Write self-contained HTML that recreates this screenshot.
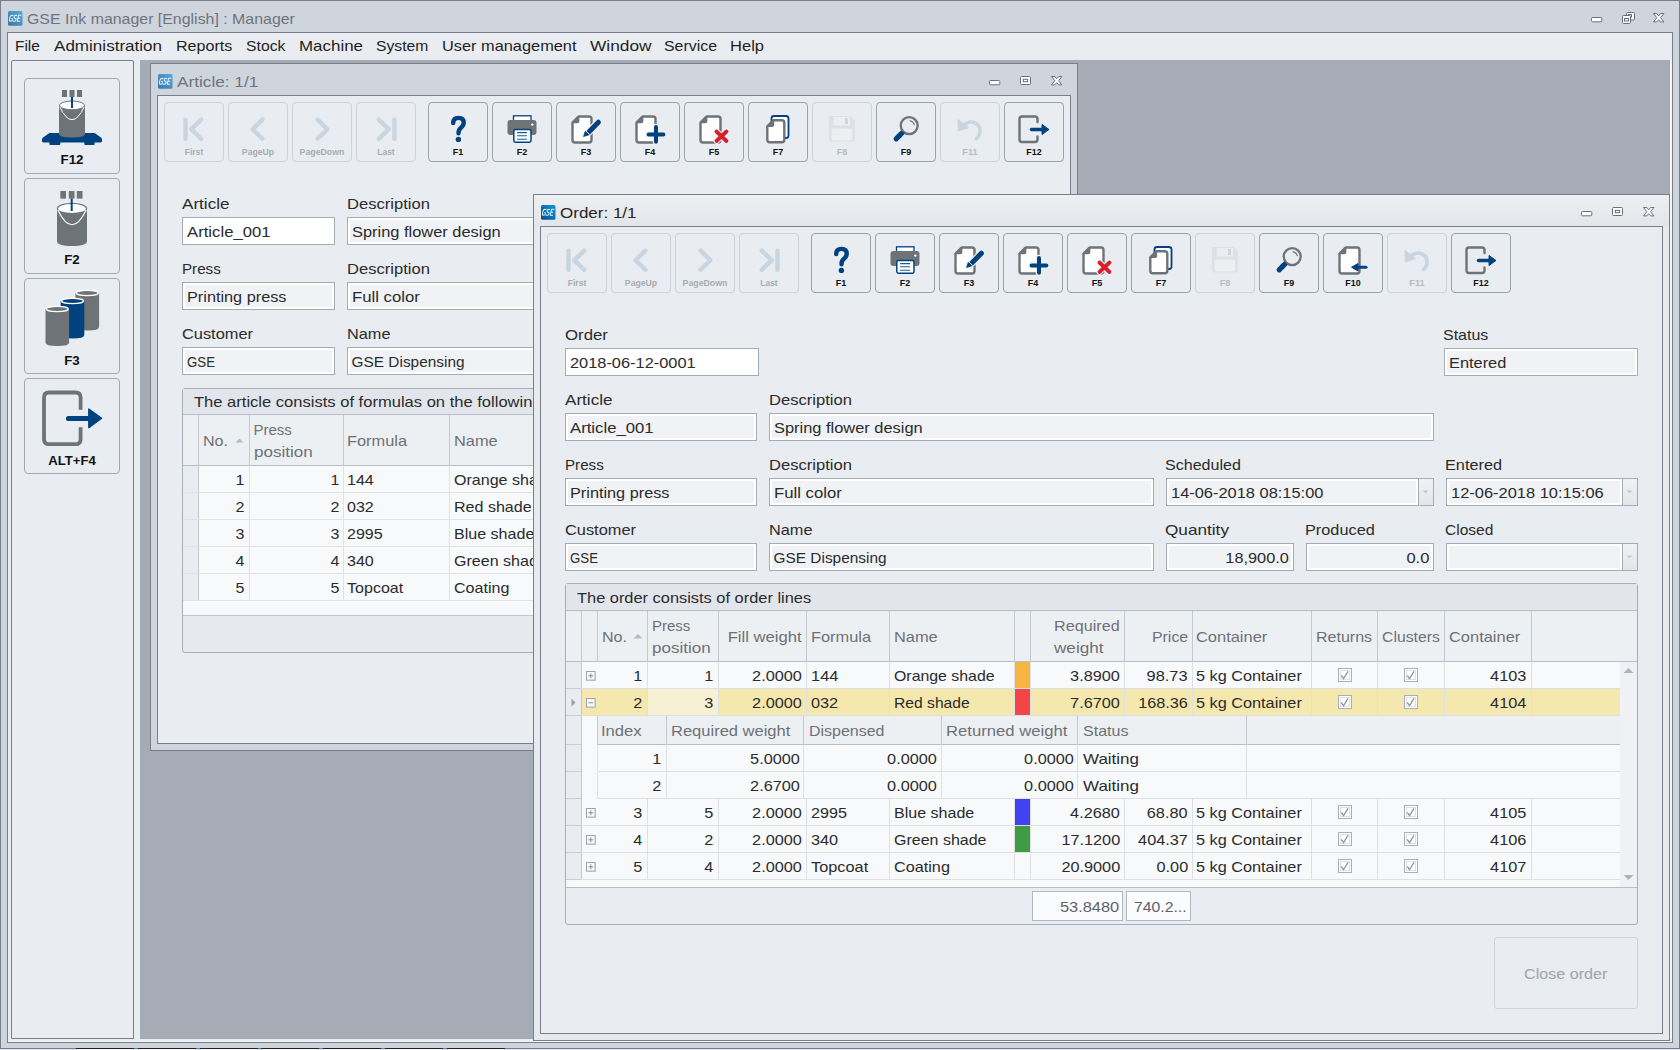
<!DOCTYPE html><html><head><meta charset="utf-8"><style>
html,body{margin:0;padding:0;}
body{width:1680px;height:1050px;position:relative;overflow:hidden;background:#cfd5dd;font-family:"Liberation Sans",sans-serif;}
.a{position:absolute;box-sizing:border-box;}
.t{position:absolute;white-space:nowrap;line-height:1;}
svg.a{overflow:visible;}
</style></head><body><div class="a" style="left:0px;top:0px;width:1680px;height:1049px;background:#cfd5dd;border:1px solid #7b7e89;"></div>
<div class="a" style="left:0px;top:1049px;width:1680px;height:1px;background:#d3e1ee;"></div>
<div class="a" style="left:76px;top:1048px;width:58px;height:1px;background:#1f2228;"></div>
<div class="a" style="left:77px;top:1049px;width:56px;height:1px;background:#fafbfc;"></div>
<div class="a" style="left:138px;top:1048px;width:58px;height:1px;background:#1f2228;"></div>
<div class="a" style="left:139px;top:1049px;width:56px;height:1px;background:#fafbfc;"></div>
<div class="a" style="left:200px;top:1048px;width:58px;height:1px;background:#1f2228;"></div>
<div class="a" style="left:201px;top:1049px;width:56px;height:1px;background:#fafbfc;"></div>
<div class="a" style="left:261px;top:1048px;width:58px;height:1px;background:#1f2228;"></div>
<div class="a" style="left:262px;top:1049px;width:56px;height:1px;background:#fafbfc;"></div>
<div class="a" style="left:323px;top:1048px;width:58px;height:1px;background:#1f2228;"></div>
<div class="a" style="left:324px;top:1049px;width:56px;height:1px;background:#fafbfc;"></div>
<div class="a" style="left:385px;top:1048px;width:58px;height:1px;background:#1f2228;"></div>
<div class="a" style="left:386px;top:1049px;width:56px;height:1px;background:#fafbfc;"></div>
<div class="a" style="left:447px;top:1048px;width:58px;height:1px;background:#1f2228;"></div>
<div class="a" style="left:448px;top:1049px;width:56px;height:1px;background:#fafbfc;"></div>
<div class="a" style="left:7px;top:32px;width:1666px;height:1011px;background:#e9ecf1;border:1px solid #7b7e89;"></div>
<svg class="a" style="left:8px;top:11px" width="15" height="15" viewBox="0 0 15 15"><defs><linearGradient id="g8_11" x1="1" y1="0" x2="0" y2="1"><stop offset="0" stop-color="#5aaad8"/><stop offset="1" stop-color="#3a76a8"/></linearGradient></defs><rect x="0" y="0" width="14.5" height="14.8" rx="1.5" fill="url(#g8_11)"/><g transform="translate(1.6 0) skewX(-12)" fill="none" stroke="#f2f7fb" stroke-width="0.95" stroke-linecap="round" stroke-linejoin="round"><path d="M4.5 4.8 Q4 4.2 3.2 4.2 Q1.6 4.2 1.6 7.2 Q1.6 10.3 3.1 10.3 Q4.1 10.3 4.5 9.7 V7.6 H3.5"/><path d="M8.2 4.7 Q7.7 4.2 7 4.2 Q5.7 4.2 5.7 5.6 Q5.7 6.6 7 7.2 Q8.4 7.8 8.4 8.8 Q8.4 10.3 7 10.3 Q6 10.3 5.5 9.8"/><path d="M12.3 4.2 H9.8 V10.3 H12.3 M9.8 7.2 H11.8"/></g></svg>
<div class="t" id="t0" style="top:11.05px;font-size:15px;color:#6f737a;left:27.00px;transform-origin:0 0;transform:scaleX(1.0604);">GSE Ink manager [English] : Manager</div>
<svg class="a" style="left:1591px;top:17px" width="12" height="6" viewBox="0 0 12 6"><rect x="0.5" y="0.5" width="10.3" height="4.3" rx="1" fill="#fff" stroke="#6b6e76"/></svg>
<svg class="a" style="left:1622px;top:12px" width="13" height="12" viewBox="0 0 13 12"><rect x="4.5" y="0.5" width="8" height="7.5" rx="1" fill="#fff" stroke="#6b6e76"/><rect x="6.5" y="2.5" width="3" height="2.5" fill="none" stroke="#6b6e76"/><rect x="0.5" y="3.5" width="8" height="8" rx="1" fill="#fff" stroke="#6b6e76"/><rect x="2.5" y="6.5" width="4" height="2.5" fill="none" stroke="#6b6e76"/></svg>
<svg class="a" style="left:1653px;top:13px" width="12" height="10" viewBox="0 0 12 10"><path d="M0.5 0.5 H3.8 L5.7 2.8 L7.6 0.5 H10.9 L7.6 4.7 L10.9 8.9 H7.6 L5.7 6.6 L3.8 8.9 H0.5 L3.8 4.7 Z" fill="#fff" stroke="#6b6e76" stroke-linejoin="round"/></svg>
<div class="t" id="t1" style="top:38.30px;font-size:15px;color:#1f1f1f;left:15.00px;transform-origin:0 0;transform:scaleX(1.0301);">File</div>
<div class="t" id="t2" style="top:38.30px;font-size:15px;color:#1f1f1f;left:53.80px;transform-origin:0 0;transform:scaleX(1.1373);">Administration</div>
<div class="t" id="t3" style="top:38.30px;font-size:15px;color:#1f1f1f;left:176.10px;transform-origin:0 0;transform:scaleX(1.0717);">Reports</div>
<div class="t" id="t4" style="top:38.30px;font-size:15px;color:#1f1f1f;left:245.70px;transform-origin:0 0;transform:scaleX(1.0502);">Stock</div>
<div class="t" id="t5" style="top:38.30px;font-size:15px;color:#1f1f1f;left:298.80px;transform-origin:0 0;transform:scaleX(1.1287);">Machine</div>
<div class="t" id="t6" style="top:38.30px;font-size:15px;color:#1f1f1f;left:375.50px;transform-origin:0 0;transform:scaleX(1.0457);">System</div>
<div class="t" id="t7" style="top:38.30px;font-size:15px;color:#1f1f1f;left:441.80px;transform-origin:0 0;transform:scaleX(1.0899);">User management</div>
<div class="t" id="t8" style="top:38.30px;font-size:15px;color:#1f1f1f;left:589.80px;transform-origin:0 0;transform:scaleX(1.1526);">Window</div>
<div class="t" id="t9" style="top:38.30px;font-size:15px;color:#1f1f1f;left:664.30px;transform-origin:0 0;transform:scaleX(1.0593);">Service</div>
<div class="t" id="t10" style="top:38.30px;font-size:15px;color:#1f1f1f;left:730.30px;transform-origin:0 0;transform:scaleX(1.1018);">Help</div>
<div class="a" style="left:11px;top:60px;width:123px;height:979px;background:#e9ecf1;border:1px solid #7b7e89;border-radius:2px 2px 0 0;"></div>
<div class="a" style="left:24px;top:78px;width:96px;height:96px;border:1px solid #a5aab2;border-radius:4px;"></div>
<div class="a" style="left:24px;top:178px;width:96px;height:96px;border:1px solid #a5aab2;border-radius:4px;"></div>
<div class="a" style="left:24px;top:278px;width:96px;height:96px;border:1px solid #a5aab2;border-radius:4px;"></div>
<div class="a" style="left:24px;top:378px;width:96px;height:96px;border:1px solid #a5aab2;border-radius:4px;"></div>
<svg class="a" style="left:24px;top:78px" width="96" height="96" viewBox="0 0 96 96"><rect x="38" y="12" width="5" height="7" fill="#6e7378"/><rect x="45.5" y="12" width="5" height="7" fill="#6e7378"/><rect x="53" y="12" width="5" height="7" fill="#6e7378"/><path d="M25.4 54.9 H70.6 L77 59.5 Q78 60.3 78 61.5 V63 Q78 64.6 76.4 64.6 H70.6 V66 Q70.6 66.9 69.6 66.9 H61.3 Q60.3 66.9 60.3 66 V64.6 H36.3 V66 Q36.3 66.9 35.3 66.9 H26.4 Q25.4 66.9 25.4 66 V64.6 H19.6 Q18 64.6 18 63 V61.5 Q18 60.3 19 59.5 Z" fill="#00427f"/><path d="M35 27.4 V56 Q35 59.6 48 59.6 Q61 59.6 61 56 V27.4 Z" fill="#6e7378"/><ellipse cx="48" cy="27.4" rx="12.5" ry="4.4" fill="#fff" stroke="#6e7378" stroke-width="1"/><path d="M35.8 29 Q48 54.4 60.2 29" fill="none" stroke="#fff" stroke-width="1"/><line x1="48" y1="19" x2="48" y2="30" stroke="#00427f" stroke-width="2"/></svg>
<svg class="a" style="left:24px;top:178px" width="96" height="96" viewBox="0 0 96 96"><rect x="36.3" y="13" width="5.7" height="7.6" fill="#6e7378"/><rect x="44.8" y="13" width="5.7" height="7.6" fill="#6e7378"/><rect x="52.8" y="13" width="5.7" height="7.6" fill="#6e7378"/><path d="M33 30.5 V63 Q33 68 48 68 Q63 68 63 63 V30.5 Z" fill="#6e7378"/><ellipse cx="48" cy="30.5" rx="14.6" ry="5.2" fill="#fff" stroke="#6e7378" stroke-width="1.2"/><path d="M33.8 32 Q48 61.5 62.2 32" fill="none" stroke="#fff" stroke-width="1.2"/><line x1="47.7" y1="20.6" x2="47.7" y2="33" stroke="#00427f" stroke-width="2"/></svg>
<svg class="a" style="left:40px;top:284px" width="66" height="66" viewBox="0 0 66 66"><path d="M35.5 9 V43 Q35.5 46.5 47.3 46.5 Q59.099999999999994 46.5 59.099999999999994 43 V9 Z" fill="#6e7378"/><ellipse cx="47.3" cy="9" rx="11.0" ry="2.6" fill="#6e7378" stroke="#fff" stroke-width="1.3"/><path d="M20.7 17 V51 Q20.7 54.5 32.5 54.5 Q44.3 54.5 44.3 51 V17 Z" fill="#00427f"/><ellipse cx="32.5" cy="17" rx="11.0" ry="2.6" fill="#00427f" stroke="#fff" stroke-width="1.3"/><path d="M5.5 25 V58.5 Q5.5 62.0 17.3 62.0 Q29.1 62.0 29.1 58.5 V25 Z" fill="#6e7378"/><ellipse cx="17.3" cy="25" rx="11.0" ry="2.6" fill="#6e7378" stroke="#fff" stroke-width="1.3"/></svg>
<svg class="a" style="left:24px;top:378px" width="96" height="96" viewBox="0 0 96 96"><path d="M56.6 31.8 V19.5 Q56.6 14.5 51.6 14.5 H25 Q20 14.5 20 19.5 V61.2 Q20 66.2 25 66.2 H51.6 Q56.6 66.2 56.6 61.2 V49.2" fill="none" stroke="#6e7378" stroke-width="3.8"/><path d="M44.5 40.5 H66" stroke="#00427f" stroke-width="5.2" stroke-linecap="round"/><path d="M64.8 31 L77.6 40.3 L64.8 49.6 Z" fill="#00427f" stroke="#00427f" stroke-width="1.4" stroke-linejoin="round"/></svg>
<div class="t" id="t11" style="top:153.47px;font-size:13.5px;color:#101010;font-weight:700;left:72.00px;transform-origin:0 0;transform:translateX(-50%) scaleX(0.9886);transform-origin:50% 0;">F12</div>
<div class="t" id="t12" style="top:253.47px;font-size:13.5px;color:#101010;font-weight:700;left:72.00px;transform-origin:0 0;transform:translateX(-50%) scaleX(0.9832);transform-origin:50% 0;">F2</div>
<div class="t" id="t13" style="top:353.77px;font-size:13.5px;color:#101010;font-weight:700;left:72.00px;transform-origin:0 0;transform:translateX(-50%) scaleX(0.9832);transform-origin:50% 0;">F3</div>
<div class="t" id="t14" style="top:453.57px;font-size:13.5px;color:#101010;font-weight:700;left:72.00px;transform-origin:0 0;transform:translateX(-50%) scaleX(0.9716);transform-origin:50% 0;">ALT+F4</div>
<div class="a" style="left:140px;top:60px;width:1530px;height:979px;background:#a6acb5;"></div>
<div class="a" style="left:1670px;top:60px;width:2px;height:982px;background:#f4f6f8;"></div>
<div class="a" style="left:140px;top:1039px;width:1532px;height:3px;background:#e9ecf1;"></div>
<div class="a" style="left:8px;top:1041px;width:1664px;height:1px;background:#f4f6f8;"></div>
<div class="a" style="left:150px;top:63px;width:928px;height:688px;background:#cfd5dd;border:1px solid #7b7e89;"></div>
<div class="a" style="left:157px;top:95px;width:914px;height:649px;background:#e9ecf1;border:1px solid #7b7e89;"></div>
<svg class="a" style="left:158px;top:74px" width="15" height="15" viewBox="0 0 15 15"><defs><linearGradient id="g158_74" x1="1" y1="0" x2="0" y2="1"><stop offset="0" stop-color="#5aaad8"/><stop offset="1" stop-color="#3a76a8"/></linearGradient></defs><rect x="0" y="0" width="14.5" height="14.8" rx="1.5" fill="url(#g158_74)"/><g transform="translate(1.6 0) skewX(-12)" fill="none" stroke="#f2f7fb" stroke-width="0.95" stroke-linecap="round" stroke-linejoin="round"><path d="M4.5 4.8 Q4 4.2 3.2 4.2 Q1.6 4.2 1.6 7.2 Q1.6 10.3 3.1 10.3 Q4.1 10.3 4.5 9.7 V7.6 H3.5"/><path d="M8.2 4.7 Q7.7 4.2 7 4.2 Q5.7 4.2 5.7 5.6 Q5.7 6.6 7 7.2 Q8.4 7.8 8.4 8.8 Q8.4 10.3 7 10.3 Q6 10.3 5.5 9.8"/><path d="M12.3 4.2 H9.8 V10.3 H12.3 M9.8 7.2 H11.8"/></g></svg>
<div class="t" id="t15" style="top:74.30px;font-size:15px;color:#6f737a;left:177.00px;transform-origin:0 0;transform:scaleX(1.1471);">Article: 1/1</div>
<svg class="a" style="left:989px;top:80px" width="12" height="6" viewBox="0 0 12 6"><rect x="0.5" y="0.5" width="10.3" height="4.3" rx="1" fill="#fff" stroke="#6b6e76"/></svg>
<svg class="a" style="left:1020px;top:76px" width="12" height="10" viewBox="0 0 12 10"><rect x="0.5" y="0.5" width="10" height="8" rx="1" fill="#fff" stroke="#6b6e76"/><rect x="3.3" y="3.3" width="4.4" height="2.4" fill="none" stroke="#6b6e76"/></svg>
<svg class="a" style="left:1051px;top:76px" width="12" height="10" viewBox="0 0 12 10"><path d="M0.5 0.5 H3.8 L5.7 2.8 L7.6 0.5 H10.9 L7.6 4.7 L10.9 8.9 H7.6 L5.7 6.6 L3.8 8.9 H0.5 L3.8 4.7 Z" fill="#fff" stroke="#6b6e76" stroke-linejoin="round"/></svg>
<div class="a" style="left:164px;top:102px;width:60px;height:60px;border:1px solid #cfd4da;border-radius:4px;"></div>
<svg class="a" style="left:164px;top:102px" width="60" height="60" viewBox="0 0 60 60"><path d="M21.5 17.6 V36.8" stroke="#c9d5e1" stroke-width="4.4" stroke-linecap="round"/><path d="M37.2 17.6 L27.2 27.2 L37.2 36.8" fill="none" stroke="#c9d5e1" stroke-width="4.4" stroke-linecap="round" stroke-linejoin="round"/></svg>
<div class="t" id="t16" style="top:148.21px;font-size:9.2px;color:#a7adb5;font-weight:700;left:194.00px;transform-origin:0 0;transform:translateX(-50%) scaleX(0.9286);transform-origin:50% 0;">First</div>
<div class="a" style="left:228px;top:102px;width:60px;height:60px;border:1px solid #cfd4da;border-radius:4px;"></div>
<svg class="a" style="left:228px;top:102px" width="60" height="60" viewBox="0 0 60 60"><path d="M34.4 17.6 L24.6 27.2 L34.4 36.8" fill="none" stroke="#c9d5e1" stroke-width="4.4" stroke-linecap="round" stroke-linejoin="round"/></svg>
<div class="t" id="t17" style="top:148.21px;font-size:9.2px;color:#a7adb5;font-weight:700;left:258.00px;transform-origin:0 0;transform:translateX(-50%) scaleX(0.9439);transform-origin:50% 0;">PageUp</div>
<div class="a" style="left:292px;top:102px;width:60px;height:60px;border:1px solid #cfd4da;border-radius:4px;"></div>
<svg class="a" style="left:292px;top:102px" width="60" height="60" viewBox="0 0 60 60"><path d="M25.6 17.6 L35.4 27.2 L25.6 36.8" fill="none" stroke="#c9d5e1" stroke-width="4.4" stroke-linecap="round" stroke-linejoin="round"/></svg>
<div class="t" id="t18" style="top:148.21px;font-size:9.2px;color:#a7adb5;font-weight:700;left:322.00px;transform-origin:0 0;transform:translateX(-50%) scaleX(0.9528);transform-origin:50% 0;">PageDown</div>
<div class="a" style="left:356px;top:102px;width:60px;height:60px;border:1px solid #cfd4da;border-radius:4px;"></div>
<svg class="a" style="left:356px;top:102px" width="60" height="60" viewBox="0 0 60 60"><path d="M38.5 17.6 V36.8" stroke="#c9d5e1" stroke-width="4.4" stroke-linecap="round"/><path d="M22.8 17.6 L32.8 27.2 L22.8 36.8" fill="none" stroke="#c9d5e1" stroke-width="4.4" stroke-linecap="round" stroke-linejoin="round"/></svg>
<div class="t" id="t19" style="top:148.21px;font-size:9.2px;color:#a7adb5;font-weight:700;left:386.00px;transform-origin:0 0;transform:translateX(-50%) scaleX(0.9203);transform-origin:50% 0;">Last</div>
<div class="a" style="left:428px;top:102px;width:60px;height:60px;border:1px solid #9ca2aa;border-radius:4px;"></div>
<svg class="a" style="left:428px;top:102px" width="60" height="60" viewBox="0 0 60 60"><path d="M25.2 21 Q25.2 15.9 30.5 15.9 Q35.7 15.9 35.7 20.6 Q35.7 23.6 33 25.7 Q30.5 27.7 30.5 31 V31.3" fill="none" stroke="#00427f" stroke-width="4.4" stroke-linecap="round" stroke-linejoin="round"/><circle cx="30.4" cy="37.4" r="2.7" fill="#00427f"/></svg>
<div class="t" id="t20" style="top:148.07px;font-size:8.9px;color:#111;font-weight:700;left:458.00px;transform-origin:0 0;transform:translateX(-50%) scaleX(1.0136);transform-origin:50% 0;">F1</div>
<div class="a" style="left:492px;top:102px;width:60px;height:60px;border:1px solid #9ca2aa;border-radius:4px;"></div>
<svg class="a" style="left:492px;top:102px" width="60" height="60" viewBox="0 0 60 60"><g transform="translate(9.5 0)"><rect x="12" y="13.8" width="17.5" height="6" fill="#fff" stroke="#00427f" stroke-width="1.3"/><rect x="6" y="18" width="29" height="15" rx="3" fill="#6e7378"/><circle cx="30.8" cy="22.6" r="1.2" fill="#fff"/><rect x="12.3" y="27.6" width="17.2" height="12.6" rx="1.6" fill="#fff" stroke="#00427f" stroke-width="1.5"/><path d="M15.6 30.6 H25.5 M15.6 33.7 H25.5 M15.6 37.2 H25.5" stroke="#1e5a94" stroke-width="1.1"/></g></svg>
<div class="t" id="t21" style="top:148.07px;font-size:8.9px;color:#111;font-weight:700;left:522.00px;transform-origin:0 0;transform:translateX(-50%) scaleX(1.0136);transform-origin:50% 0;">F2</div>
<div class="a" style="left:556px;top:102px;width:60px;height:60px;border:1px solid #9ca2aa;border-radius:4px;"></div>
<svg class="a" style="left:556px;top:102px" width="60" height="60" viewBox="0 0 60 60"><path d="M22.5 14.5 H33.0 Q35.5 14.5 35.5 17.0 V38.0 Q35.5 40.5 33.0 40.5 H19.0 Q16.5 40.5 16.5 38.0 V20.5 Z" fill="#fff" stroke="#6e7378" stroke-width="2.4" stroke-linejoin="round"/><path d="M15.7 21.3 L23.3 13.7 V19.5 Q23.3 21.3 21.5 21.3 Z" fill="#6e7378"/><path d="M33.2 29.6 L42.4 20.2" stroke="#eef0f4" stroke-width="7.4" stroke-linecap="round"/><path d="M32.6 30.2 L42.4 20.2" stroke="#00427f" stroke-width="5" stroke-linecap="round"/><path d="M27.5 34.6 L29.2 29.3 L32.8 32.9 Z" fill="#00427f" stroke="#00427f" stroke-width="0.7" stroke-linejoin="round"/><path d="M29.6 28.6 L33.6 32.6" stroke="#fff" stroke-width="0.9"/></svg>
<div class="t" id="t22" style="top:148.07px;font-size:8.9px;color:#111;font-weight:700;left:586.00px;transform-origin:0 0;transform:translateX(-50%) scaleX(1.0136);transform-origin:50% 0;">F3</div>
<div class="a" style="left:620px;top:102px;width:60px;height:60px;border:1px solid #9ca2aa;border-radius:4px;"></div>
<svg class="a" style="left:620px;top:102px" width="60" height="60" viewBox="0 0 60 60"><path d="M22.5 14.5 H33.0 Q35.5 14.5 35.5 17.0 V38.0 Q35.5 40.5 33.0 40.5 H19.0 Q16.5 40.5 16.5 38.0 V20.5 Z" fill="#fff" stroke="#6e7378" stroke-width="2.4" stroke-linejoin="round"/><path d="M15.7 21.3 L23.3 13.7 V19.5 Q23.3 21.3 21.5 21.3 Z" fill="#6e7378"/><path d="M36 25 V39.8 M28.6 32.4 H43.4" stroke="#eef0f4" stroke-width="6.4" stroke-linecap="round"/><path d="M36 25 V39.8 M28.6 32.4 H43.4" stroke="#00427f" stroke-width="4" stroke-linecap="round"/></svg>
<div class="t" id="t23" style="top:148.07px;font-size:8.9px;color:#111;font-weight:700;left:650.00px;transform-origin:0 0;transform:translateX(-50%) scaleX(1.0136);transform-origin:50% 0;">F4</div>
<div class="a" style="left:684px;top:102px;width:60px;height:60px;border:1px solid #9ca2aa;border-radius:4px;"></div>
<svg class="a" style="left:684px;top:102px" width="60" height="60" viewBox="0 0 60 60"><path d="M22.5 14.5 H34.0 Q36.5 14.5 36.5 17.0 V38.0 Q36.5 40.5 34.0 40.5 H19.0 Q16.5 40.5 16.5 38.0 V20.5 Z" fill="#fff" stroke="#6e7378" stroke-width="2.4" stroke-linejoin="round"/><path d="M15.7 21.3 L23.3 13.7 V19.5 Q23.3 21.3 21.5 21.3 Z" fill="#6e7378"/><path d="M32.5 29.5 L42.5 39 M42.5 29.5 L32.5 39" stroke="#eef0f4" stroke-width="6" stroke-linecap="round"/><path d="M32.5 29.5 L42.5 39 M42.5 29.5 L32.5 39" stroke="#d9202a" stroke-width="3.8" stroke-linecap="round"/></svg>
<div class="t" id="t24" style="top:148.07px;font-size:8.9px;color:#111;font-weight:700;left:714.00px;transform-origin:0 0;transform:translateX(-50%) scaleX(1.0136);transform-origin:50% 0;">F5</div>
<div class="a" style="left:748px;top:102px;width:60px;height:60px;border:1px solid #9ca2aa;border-radius:4px;"></div>
<svg class="a" style="left:748px;top:102px" width="60" height="60" viewBox="0 0 60 60"><rect x="23.5" y="14" width="17" height="22" rx="2.5" fill="#fff" stroke="#00427f" stroke-width="1.8"/><path d="M25.3 18.3 H33.8 Q36.3 18.3 36.3 20.8 V37.8 Q36.3 40.3 33.8 40.3 H21.8 Q19.3 40.3 19.3 37.8 V24.3 Z" fill="#fff" stroke="#6e7378" stroke-width="2.4" stroke-linejoin="round"/><path d="M18.5 25.1 L26.1 17.5 V23.3 Q26.1 25.1 24.3 25.1 Z" fill="#6e7378"/></svg>
<div class="t" id="t25" style="top:148.07px;font-size:8.9px;color:#111;font-weight:700;left:778.00px;transform-origin:0 0;transform:translateX(-50%) scaleX(1.0136);transform-origin:50% 0;">F7</div>
<div class="a" style="left:812px;top:102px;width:60px;height:60px;border:1px solid #cfd4da;border-radius:4px;"></div>
<svg class="a" style="left:812px;top:102px" width="60" height="60" viewBox="0 0 60 60"><path d="M19 13.9 H38.2 L42.8 18.5 V37.6 Q42.8 39.6 40.8 39.6 H19 Q17 39.6 17 37.6 V15.9 Q17 13.9 19 13.9 Z" fill="#dde1e6"/><rect x="21.7" y="15" width="16.4" height="8.6" rx="1" fill="#eceef2"/><rect x="33" y="16" width="3" height="6" fill="#cbd6e2"/><rect x="19.6" y="26.4" width="20.7" height="12.2" rx="1.5" fill="#eceef2"/></svg>
<div class="t" id="t26" style="top:148.07px;font-size:8.9px;color:#b7bcc3;font-weight:700;left:842.00px;transform-origin:0 0;transform:translateX(-50%) scaleX(1.0136);transform-origin:50% 0;">F8</div>
<div class="a" style="left:876px;top:102px;width:60px;height:60px;border:1px solid #9ca2aa;border-radius:4px;"></div>
<svg class="a" style="left:876px;top:102px" width="60" height="60" viewBox="0 0 60 60"><circle cx="33.2" cy="23.6" r="8.5" fill="none" stroke="#6e7378" stroke-width="2.3"/><path d="M33.8 18.6 Q37.6 19.4 38.4 23.2" fill="none" stroke="#6e7378" stroke-width="1.1"/><path d="M20.2 36.8 L24 33" stroke="#00427f" stroke-width="5.2" stroke-linecap="round"/><path d="M22.5 34.5 L27 30" stroke="#00427f" stroke-width="5.2"/></svg>
<div class="t" id="t27" style="top:148.07px;font-size:8.9px;color:#111;font-weight:700;left:906.00px;transform-origin:0 0;transform:translateX(-50%) scaleX(1.0136);transform-origin:50% 0;">F9</div>
<div class="a" style="left:940px;top:102px;width:60px;height:60px;border:1px solid #cfd4da;border-radius:4px;"></div>
<svg class="a" style="left:940px;top:102px" width="60" height="60" viewBox="0 0 60 60"><path d="M22 24.5 Q27 19.5 32 20 Q40 21.5 40 29 Q40 33.5 36.5 36.5" fill="none" stroke="#c9d5e1" stroke-width="3.6" stroke-linecap="round"/><path d="M18 17.5 L18.5 29 L28.5 25.5 Z" fill="#c9d5e1" stroke="#c9d5e1" stroke-linejoin="round"/></svg>
<div class="t" id="t28" style="top:148.07px;font-size:8.9px;color:#b7bcc3;font-weight:700;left:970.00px;transform-origin:0 0;transform:translateX(-50%) scaleX(1.0329);transform-origin:50% 0;">F11</div>
<div class="a" style="left:1004px;top:102px;width:60px;height:60px;border:1px solid #9ca2aa;border-radius:4px;"></div>
<svg class="a" style="left:1004px;top:102px" width="60" height="60" viewBox="0 0 60 60"><path d="M33.5 20 V17 Q33.5 14.5 31 14.5 H18 Q15.5 14.5 15.5 17 V37.5 Q15.5 40 18 40 H31 Q33.5 40 33.5 37.5 V34.5" fill="none" stroke="#6e7378" stroke-width="2.4" stroke-linecap="round"/><path d="M27.5 27.5 H39" stroke="#00427f" stroke-width="3.4" stroke-linecap="round"/><path d="M38 22.5 L45 27.5 L38 32.5 Z" fill="#00427f" stroke="#00427f" stroke-width="1" stroke-linejoin="round"/></svg>
<div class="t" id="t29" style="top:148.07px;font-size:8.9px;color:#111;font-weight:700;left:1034.00px;transform-origin:0 0;transform:translateX(-50%) scaleX(1.0002);transform-origin:50% 0;">F12</div>
<div class="t" id="t30" style="top:195.90px;font-size:15px;color:#2b2b2b;left:181.70px;transform-origin:0 0;transform:scaleX(1.1394);">Article</div>
<div class="t" id="t31" style="top:195.90px;font-size:15px;color:#2b2b2b;left:346.70px;transform-origin:0 0;transform:scaleX(1.1049);">Description</div>
<div class="t" id="t32" style="top:260.90px;font-size:15px;color:#2b2b2b;left:181.70px;transform-origin:0 0;transform:scaleX(1.0093);">Press</div>
<div class="t" id="t33" style="top:260.90px;font-size:15px;color:#2b2b2b;left:346.70px;transform-origin:0 0;transform:scaleX(1.1049);">Description</div>
<div class="t" id="t34" style="top:325.90px;font-size:15px;color:#2b2b2b;left:181.70px;transform-origin:0 0;transform:scaleX(1.0918);">Customer</div>
<div class="t" id="t35" style="top:325.90px;font-size:15px;color:#2b2b2b;left:346.70px;transform-origin:0 0;transform:scaleX(1.0871);">Name</div>
<div class="a" style="left:182px;top:217px;width:153px;height:28px;background:#ffffff;border:1px solid #a6acb4;"></div>
<div class="a" style="left:347px;top:217px;width:554px;height:28px;background:#ffffff;border:1px solid #a6acb4;"></div>
<div class="a" style="left:350px;top:220px;width:548px;height:22px;background:#f0f2f5;"></div>
<div class="a" style="left:182px;top:282px;width:153px;height:28px;background:#ffffff;border:1px solid #a6acb4;"></div>
<div class="a" style="left:185px;top:285px;width:147px;height:22px;background:#f0f2f5;"></div>
<div class="a" style="left:347px;top:282px;width:554px;height:28px;background:#ffffff;border:1px solid #a6acb4;"></div>
<div class="a" style="left:350px;top:285px;width:548px;height:22px;background:#f0f2f5;"></div>
<div class="a" style="left:182px;top:347px;width:153px;height:28px;background:#ffffff;border:1px solid #a6acb4;"></div>
<div class="a" style="left:185px;top:350px;width:147px;height:22px;background:#f0f2f5;"></div>
<div class="a" style="left:347px;top:347px;width:554px;height:28px;background:#ffffff;border:1px solid #a6acb4;"></div>
<div class="a" style="left:350px;top:350px;width:548px;height:22px;background:#f0f2f5;"></div>
<div class="t" id="t36" style="top:223.86px;font-size:15.4px;color:#2b2b2b;left:186.60px;transform-origin:0 0;transform:scaleX(1.0857);">Article_001</div>
<div class="t" id="t37" style="top:223.86px;font-size:15.4px;color:#2b2b2b;left:351.60px;transform-origin:0 0;transform:scaleX(1.0663);">Spring flower design</div>
<div class="t" id="t38" style="top:288.86px;font-size:15.4px;color:#2b2b2b;left:186.60px;transform-origin:0 0;transform:scaleX(1.0573);">Printing press</div>
<div class="t" id="t39" style="top:288.86px;font-size:15.4px;color:#2b2b2b;left:351.60px;transform-origin:0 0;transform:scaleX(1.0875);">Full color</div>
<div class="t" id="t40" style="top:353.86px;font-size:15.4px;color:#2b2b2b;left:186.60px;transform-origin:0 0;transform:scaleX(0.8611);">GSE</div>
<div class="t" id="t41" style="top:353.86px;font-size:15.4px;color:#2b2b2b;left:351.60px;transform-origin:0 0;">GSE Dispensing</div>
<div class="a" style="left:182px;top:388px;width:719px;height:265px;background:#e6e9ee;border:1px solid #a9aeb6;border-radius:3px;"></div>
<div class="a" style="left:183px;top:389px;width:717px;height:25px;background:#e2e6ec;"></div>
<div class="a" style="left:183px;top:414px;width:717px;height:1px;background:#b9bec6;"></div>
<div class="t" id="t42" style="top:393.55px;font-size:15px;color:#2b2b2b;left:193.80px;transform-origin:0 0;transform:scaleX(1.1030);">The article consists of formulas on the following lines</div>
<div class="a" style="left:183px;top:415px;width:717px;height:50px;background:#edf0f3;"></div>
<div class="a" style="left:183px;top:465px;width:717px;height:1px;background:#b9bec6;"></div>
<div class="a" style="left:198px;top:415px;width:1px;height:51px;background:#c4c9d0;"></div>
<div class="a" style="left:249px;top:415px;width:1px;height:51px;background:#c4c9d0;"></div>
<div class="a" style="left:343px;top:415px;width:1px;height:51px;background:#c4c9d0;"></div>
<div class="a" style="left:449px;top:415px;width:1px;height:51px;background:#c4c9d0;"></div>
<div class="a" style="left:620px;top:415px;width:1px;height:51px;background:#c4c9d0;"></div>
<div class="t" id="t43" style="top:432.70px;font-size:15px;color:#6d7177;left:202.70px;transform-origin:0 0;transform:scaleX(1.0710);">No.</div>
<svg class="a" style="left:235px;top:438px" width="9" height="5" viewBox="0 0 9 5"><path d="M0.5 4.5 L4.5 0.5 L8.5 4.5 Z" fill="#b7bcc3"/></svg>
<div class="t" id="t44" style="top:422.30px;font-size:15px;color:#6d7177;left:253.50px;transform-origin:0 0;">Press</div>
<div class="t" id="t45" style="top:443.90px;font-size:15px;color:#6d7177;left:253.50px;transform-origin:0 0;transform:scaleX(1.1353);">position</div>
<div class="t" id="t46" style="top:432.70px;font-size:15px;color:#6d7177;left:347.30px;transform-origin:0 0;transform:scaleX(1.0924);">Formula</div>
<div class="t" id="t47" style="top:432.70px;font-size:15px;color:#6d7177;left:453.70px;transform-origin:0 0;transform:scaleX(1.0921);">Name</div>
<div class="a" style="left:183px;top:466px;width:717px;height:149px;background:#f8f9fb;"></div>
<div class="a" style="left:183px;top:466px;width:15px;height:134px;background:#e9ecf0;"></div>
<div class="a" style="left:198px;top:466px;width:1px;height:134px;background:#c4c9d0;"></div>
<div class="a" style="left:183px;top:492px;width:717px;height:1px;background:#dfe2e7;"></div>
<div class="a" style="left:249px;top:466px;width:1px;height:26px;background:#dfe2e7;"></div>
<div class="a" style="left:343px;top:466px;width:1px;height:26px;background:#dfe2e7;"></div>
<div class="a" style="left:449px;top:466px;width:1px;height:26px;background:#dfe2e7;"></div>
<div class="a" style="left:620px;top:466px;width:1px;height:26px;background:#dfe2e7;"></div>
<div class="t" id="t48" style="top:472.30px;font-size:15px;color:#2b2b2b;right:1435.40px;transform-origin:100% 0;transform:scaleX(1.0700);">1</div>
<div class="t" id="t49" style="top:472.30px;font-size:15px;color:#2b2b2b;right:1341.10px;transform-origin:100% 0;transform:scaleX(1.0700);">1</div>
<div class="t" id="t50" style="top:472.30px;font-size:15px;color:#2b2b2b;left:347.40px;transform-origin:0 0;transform:scaleX(1.0700);">144</div>
<div class="t" id="t51" style="top:472.30px;font-size:15px;color:#2b2b2b;left:453.70px;transform-origin:0 0;transform:scaleX(1.0700);">Orange shade</div>
<div class="a" style="left:183px;top:519px;width:717px;height:1px;background:#dfe2e7;"></div>
<div class="a" style="left:249px;top:493px;width:1px;height:26px;background:#dfe2e7;"></div>
<div class="a" style="left:343px;top:493px;width:1px;height:26px;background:#dfe2e7;"></div>
<div class="a" style="left:449px;top:493px;width:1px;height:26px;background:#dfe2e7;"></div>
<div class="a" style="left:620px;top:493px;width:1px;height:26px;background:#dfe2e7;"></div>
<div class="t" id="t52" style="top:499.30px;font-size:15px;color:#2b2b2b;right:1435.40px;transform-origin:100% 0;transform:scaleX(1.0700);">2</div>
<div class="t" id="t53" style="top:499.30px;font-size:15px;color:#2b2b2b;right:1341.10px;transform-origin:100% 0;transform:scaleX(1.0700);">2</div>
<div class="t" id="t54" style="top:499.30px;font-size:15px;color:#2b2b2b;left:347.40px;transform-origin:0 0;transform:scaleX(1.0700);">032</div>
<div class="t" id="t55" style="top:499.30px;font-size:15px;color:#2b2b2b;left:453.70px;transform-origin:0 0;transform:scaleX(1.0700);">Red shade</div>
<div class="a" style="left:183px;top:546px;width:717px;height:1px;background:#dfe2e7;"></div>
<div class="a" style="left:249px;top:520px;width:1px;height:26px;background:#dfe2e7;"></div>
<div class="a" style="left:343px;top:520px;width:1px;height:26px;background:#dfe2e7;"></div>
<div class="a" style="left:449px;top:520px;width:1px;height:26px;background:#dfe2e7;"></div>
<div class="a" style="left:620px;top:520px;width:1px;height:26px;background:#dfe2e7;"></div>
<div class="t" id="t56" style="top:526.30px;font-size:15px;color:#2b2b2b;right:1435.40px;transform-origin:100% 0;transform:scaleX(1.0700);">3</div>
<div class="t" id="t57" style="top:526.30px;font-size:15px;color:#2b2b2b;right:1341.10px;transform-origin:100% 0;transform:scaleX(1.0700);">3</div>
<div class="t" id="t58" style="top:526.30px;font-size:15px;color:#2b2b2b;left:347.40px;transform-origin:0 0;transform:scaleX(1.0700);">2995</div>
<div class="t" id="t59" style="top:526.30px;font-size:15px;color:#2b2b2b;left:453.70px;transform-origin:0 0;transform:scaleX(1.0700);">Blue shade</div>
<div class="a" style="left:183px;top:573px;width:717px;height:1px;background:#dfe2e7;"></div>
<div class="a" style="left:249px;top:547px;width:1px;height:26px;background:#dfe2e7;"></div>
<div class="a" style="left:343px;top:547px;width:1px;height:26px;background:#dfe2e7;"></div>
<div class="a" style="left:449px;top:547px;width:1px;height:26px;background:#dfe2e7;"></div>
<div class="a" style="left:620px;top:547px;width:1px;height:26px;background:#dfe2e7;"></div>
<div class="t" id="t60" style="top:553.30px;font-size:15px;color:#2b2b2b;right:1435.40px;transform-origin:100% 0;transform:scaleX(1.0700);">4</div>
<div class="t" id="t61" style="top:553.30px;font-size:15px;color:#2b2b2b;right:1341.10px;transform-origin:100% 0;transform:scaleX(1.0700);">4</div>
<div class="t" id="t62" style="top:553.30px;font-size:15px;color:#2b2b2b;left:347.40px;transform-origin:0 0;transform:scaleX(1.0700);">340</div>
<div class="t" id="t63" style="top:553.30px;font-size:15px;color:#2b2b2b;left:453.70px;transform-origin:0 0;transform:scaleX(1.0700);">Green shade</div>
<div class="a" style="left:183px;top:600px;width:717px;height:1px;background:#dfe2e7;"></div>
<div class="a" style="left:249px;top:574px;width:1px;height:26px;background:#dfe2e7;"></div>
<div class="a" style="left:343px;top:574px;width:1px;height:26px;background:#dfe2e7;"></div>
<div class="a" style="left:449px;top:574px;width:1px;height:26px;background:#dfe2e7;"></div>
<div class="a" style="left:620px;top:574px;width:1px;height:26px;background:#dfe2e7;"></div>
<div class="t" id="t64" style="top:580.30px;font-size:15px;color:#2b2b2b;right:1435.40px;transform-origin:100% 0;transform:scaleX(1.0700);">5</div>
<div class="t" id="t65" style="top:580.30px;font-size:15px;color:#2b2b2b;right:1341.10px;transform-origin:100% 0;transform:scaleX(1.0700);">5</div>
<div class="t" id="t66" style="top:580.30px;font-size:15px;color:#2b2b2b;left:347.40px;transform-origin:0 0;transform:scaleX(1.0700);">Topcoat</div>
<div class="t" id="t67" style="top:580.30px;font-size:15px;color:#2b2b2b;left:453.70px;transform-origin:0 0;transform:scaleX(1.0700);">Coating</div>
<div class="a" style="left:183px;top:615px;width:717px;height:1px;background:#c4c9d0;"></div>
<div class="a" style="left:533px;top:194px;width:1137px;height:847px;background:#e6e9ed;border:1px solid #7b7e89;"></div>
<div class="a" style="left:534px;top:195px;width:1135px;height:31px;background:linear-gradient(#eeeff2,#e2e5e9);"></div>
<div class="a" style="left:540px;top:226px;width:1123px;height:808px;background:#e9ecf1;border:1px solid #7b7e89;"></div>
<svg class="a" style="left:541px;top:205px" width="15" height="15" viewBox="0 0 15 15"><defs><linearGradient id="g541_205" x1="1" y1="0" x2="0" y2="1"><stop offset="0" stop-color="#0a98dc"/><stop offset="1" stop-color="#004f8e"/></linearGradient></defs><rect x="0" y="0" width="14.5" height="14.8" rx="1.5" fill="url(#g541_205)"/><g transform="translate(1.6 0) skewX(-12)" fill="none" stroke="#f2f7fb" stroke-width="0.95" stroke-linecap="round" stroke-linejoin="round"><path d="M4.5 4.8 Q4 4.2 3.2 4.2 Q1.6 4.2 1.6 7.2 Q1.6 10.3 3.1 10.3 Q4.1 10.3 4.5 9.7 V7.6 H3.5"/><path d="M8.2 4.7 Q7.7 4.2 7 4.2 Q5.7 4.2 5.7 5.6 Q5.7 6.6 7 7.2 Q8.4 7.8 8.4 8.8 Q8.4 10.3 7 10.3 Q6 10.3 5.5 9.8"/><path d="M12.3 4.2 H9.8 V10.3 H12.3 M9.8 7.2 H11.8"/></g></svg>
<div class="t" id="t68" style="top:205.00px;font-size:15px;color:#262626;left:560.00px;transform-origin:0 0;transform:scaleX(1.1328);">Order: 1/1</div>
<svg class="a" style="left:1581px;top:211px" width="12" height="6" viewBox="0 0 12 6"><rect x="0.5" y="0.5" width="10.3" height="4.3" rx="1" fill="#fff" stroke="#6b6e76"/></svg>
<svg class="a" style="left:1612px;top:207px" width="12" height="10" viewBox="0 0 12 10"><rect x="0.5" y="0.5" width="10" height="8" rx="1" fill="#fff" stroke="#6b6e76"/><rect x="3.3" y="3.3" width="4.4" height="2.4" fill="none" stroke="#6b6e76"/></svg>
<svg class="a" style="left:1643px;top:207px" width="12" height="10" viewBox="0 0 12 10"><path d="M0.5 0.5 H3.8 L5.7 2.8 L7.6 0.5 H10.9 L7.6 4.7 L10.9 8.9 H7.6 L5.7 6.6 L3.8 8.9 H0.5 L3.8 4.7 Z" fill="#fff" stroke="#6b6e76" stroke-linejoin="round"/></svg>
<div class="a" style="left:547px;top:233px;width:60px;height:60px;border:1px solid #cfd4da;border-radius:4px;"></div>
<svg class="a" style="left:547px;top:233px" width="60" height="60" viewBox="0 0 60 60"><path d="M21.5 17.6 V36.8" stroke="#c9d5e1" stroke-width="4.4" stroke-linecap="round"/><path d="M37.2 17.6 L27.2 27.2 L37.2 36.8" fill="none" stroke="#c9d5e1" stroke-width="4.4" stroke-linecap="round" stroke-linejoin="round"/></svg>
<div class="t" id="t69" style="top:279.21px;font-size:9.2px;color:#a7adb5;font-weight:700;left:577.00px;transform-origin:0 0;transform:translateX(-50%) scaleX(0.9286);transform-origin:50% 0;">First</div>
<div class="a" style="left:611px;top:233px;width:60px;height:60px;border:1px solid #cfd4da;border-radius:4px;"></div>
<svg class="a" style="left:611px;top:233px" width="60" height="60" viewBox="0 0 60 60"><path d="M34.4 17.6 L24.6 27.2 L34.4 36.8" fill="none" stroke="#c9d5e1" stroke-width="4.4" stroke-linecap="round" stroke-linejoin="round"/></svg>
<div class="t" id="t70" style="top:279.21px;font-size:9.2px;color:#a7adb5;font-weight:700;left:641.00px;transform-origin:0 0;transform:translateX(-50%) scaleX(0.9439);transform-origin:50% 0;">PageUp</div>
<div class="a" style="left:675px;top:233px;width:60px;height:60px;border:1px solid #cfd4da;border-radius:4px;"></div>
<svg class="a" style="left:675px;top:233px" width="60" height="60" viewBox="0 0 60 60"><path d="M25.6 17.6 L35.4 27.2 L25.6 36.8" fill="none" stroke="#c9d5e1" stroke-width="4.4" stroke-linecap="round" stroke-linejoin="round"/></svg>
<div class="t" id="t71" style="top:279.21px;font-size:9.2px;color:#a7adb5;font-weight:700;left:705.00px;transform-origin:0 0;transform:translateX(-50%) scaleX(0.9528);transform-origin:50% 0;">PageDown</div>
<div class="a" style="left:739px;top:233px;width:60px;height:60px;border:1px solid #cfd4da;border-radius:4px;"></div>
<svg class="a" style="left:739px;top:233px" width="60" height="60" viewBox="0 0 60 60"><path d="M38.5 17.6 V36.8" stroke="#c9d5e1" stroke-width="4.4" stroke-linecap="round"/><path d="M22.8 17.6 L32.8 27.2 L22.8 36.8" fill="none" stroke="#c9d5e1" stroke-width="4.4" stroke-linecap="round" stroke-linejoin="round"/></svg>
<div class="t" id="t72" style="top:279.21px;font-size:9.2px;color:#a7adb5;font-weight:700;left:769.00px;transform-origin:0 0;transform:translateX(-50%) scaleX(0.9203);transform-origin:50% 0;">Last</div>
<div class="a" style="left:811px;top:233px;width:60px;height:60px;border:1px solid #9ca2aa;border-radius:4px;"></div>
<svg class="a" style="left:811px;top:233px" width="60" height="60" viewBox="0 0 60 60"><path d="M25.2 21 Q25.2 15.9 30.5 15.9 Q35.7 15.9 35.7 20.6 Q35.7 23.6 33 25.7 Q30.5 27.7 30.5 31 V31.3" fill="none" stroke="#00427f" stroke-width="4.4" stroke-linecap="round" stroke-linejoin="round"/><circle cx="30.4" cy="37.4" r="2.7" fill="#00427f"/></svg>
<div class="t" id="t73" style="top:279.07px;font-size:8.9px;color:#111;font-weight:700;left:841.00px;transform-origin:0 0;transform:translateX(-50%) scaleX(1.0136);transform-origin:50% 0;">F1</div>
<div class="a" style="left:875px;top:233px;width:60px;height:60px;border:1px solid #9ca2aa;border-radius:4px;"></div>
<svg class="a" style="left:875px;top:233px" width="60" height="60" viewBox="0 0 60 60"><g transform="translate(9.5 0)"><rect x="12" y="13.8" width="17.5" height="6" fill="#fff" stroke="#00427f" stroke-width="1.3"/><rect x="6" y="18" width="29" height="15" rx="3" fill="#6e7378"/><circle cx="30.8" cy="22.6" r="1.2" fill="#fff"/><rect x="12.3" y="27.6" width="17.2" height="12.6" rx="1.6" fill="#fff" stroke="#00427f" stroke-width="1.5"/><path d="M15.6 30.6 H25.5 M15.6 33.7 H25.5 M15.6 37.2 H25.5" stroke="#1e5a94" stroke-width="1.1"/></g></svg>
<div class="t" id="t74" style="top:279.07px;font-size:8.9px;color:#111;font-weight:700;left:905.00px;transform-origin:0 0;transform:translateX(-50%) scaleX(1.0136);transform-origin:50% 0;">F2</div>
<div class="a" style="left:939px;top:233px;width:60px;height:60px;border:1px solid #9ca2aa;border-radius:4px;"></div>
<svg class="a" style="left:939px;top:233px" width="60" height="60" viewBox="0 0 60 60"><path d="M22.5 14.5 H33.0 Q35.5 14.5 35.5 17.0 V38.0 Q35.5 40.5 33.0 40.5 H19.0 Q16.5 40.5 16.5 38.0 V20.5 Z" fill="#fff" stroke="#6e7378" stroke-width="2.4" stroke-linejoin="round"/><path d="M15.7 21.3 L23.3 13.7 V19.5 Q23.3 21.3 21.5 21.3 Z" fill="#6e7378"/><path d="M33.2 29.6 L42.4 20.2" stroke="#eef0f4" stroke-width="7.4" stroke-linecap="round"/><path d="M32.6 30.2 L42.4 20.2" stroke="#00427f" stroke-width="5" stroke-linecap="round"/><path d="M27.5 34.6 L29.2 29.3 L32.8 32.9 Z" fill="#00427f" stroke="#00427f" stroke-width="0.7" stroke-linejoin="round"/><path d="M29.6 28.6 L33.6 32.6" stroke="#fff" stroke-width="0.9"/></svg>
<div class="t" id="t75" style="top:279.07px;font-size:8.9px;color:#111;font-weight:700;left:969.00px;transform-origin:0 0;transform:translateX(-50%) scaleX(1.0136);transform-origin:50% 0;">F3</div>
<div class="a" style="left:1003px;top:233px;width:60px;height:60px;border:1px solid #9ca2aa;border-radius:4px;"></div>
<svg class="a" style="left:1003px;top:233px" width="60" height="60" viewBox="0 0 60 60"><path d="M22.5 14.5 H33.0 Q35.5 14.5 35.5 17.0 V38.0 Q35.5 40.5 33.0 40.5 H19.0 Q16.5 40.5 16.5 38.0 V20.5 Z" fill="#fff" stroke="#6e7378" stroke-width="2.4" stroke-linejoin="round"/><path d="M15.7 21.3 L23.3 13.7 V19.5 Q23.3 21.3 21.5 21.3 Z" fill="#6e7378"/><path d="M36 25 V39.8 M28.6 32.4 H43.4" stroke="#eef0f4" stroke-width="6.4" stroke-linecap="round"/><path d="M36 25 V39.8 M28.6 32.4 H43.4" stroke="#00427f" stroke-width="4" stroke-linecap="round"/></svg>
<div class="t" id="t76" style="top:279.07px;font-size:8.9px;color:#111;font-weight:700;left:1033.00px;transform-origin:0 0;transform:translateX(-50%) scaleX(1.0136);transform-origin:50% 0;">F4</div>
<div class="a" style="left:1067px;top:233px;width:60px;height:60px;border:1px solid #9ca2aa;border-radius:4px;"></div>
<svg class="a" style="left:1067px;top:233px" width="60" height="60" viewBox="0 0 60 60"><path d="M22.5 14.5 H34.0 Q36.5 14.5 36.5 17.0 V38.0 Q36.5 40.5 34.0 40.5 H19.0 Q16.5 40.5 16.5 38.0 V20.5 Z" fill="#fff" stroke="#6e7378" stroke-width="2.4" stroke-linejoin="round"/><path d="M15.7 21.3 L23.3 13.7 V19.5 Q23.3 21.3 21.5 21.3 Z" fill="#6e7378"/><path d="M32.5 29.5 L42.5 39 M42.5 29.5 L32.5 39" stroke="#eef0f4" stroke-width="6" stroke-linecap="round"/><path d="M32.5 29.5 L42.5 39 M42.5 29.5 L32.5 39" stroke="#d9202a" stroke-width="3.8" stroke-linecap="round"/></svg>
<div class="t" id="t77" style="top:279.07px;font-size:8.9px;color:#111;font-weight:700;left:1097.00px;transform-origin:0 0;transform:translateX(-50%) scaleX(1.0136);transform-origin:50% 0;">F5</div>
<div class="a" style="left:1131px;top:233px;width:60px;height:60px;border:1px solid #9ca2aa;border-radius:4px;"></div>
<svg class="a" style="left:1131px;top:233px" width="60" height="60" viewBox="0 0 60 60"><rect x="23.5" y="14" width="17" height="22" rx="2.5" fill="#fff" stroke="#00427f" stroke-width="1.8"/><path d="M25.3 18.3 H33.8 Q36.3 18.3 36.3 20.8 V37.8 Q36.3 40.3 33.8 40.3 H21.8 Q19.3 40.3 19.3 37.8 V24.3 Z" fill="#fff" stroke="#6e7378" stroke-width="2.4" stroke-linejoin="round"/><path d="M18.5 25.1 L26.1 17.5 V23.3 Q26.1 25.1 24.3 25.1 Z" fill="#6e7378"/></svg>
<div class="t" id="t78" style="top:279.07px;font-size:8.9px;color:#111;font-weight:700;left:1161.00px;transform-origin:0 0;transform:translateX(-50%) scaleX(1.0136);transform-origin:50% 0;">F7</div>
<div class="a" style="left:1195px;top:233px;width:60px;height:60px;border:1px solid #cfd4da;border-radius:4px;"></div>
<svg class="a" style="left:1195px;top:233px" width="60" height="60" viewBox="0 0 60 60"><path d="M19 13.9 H38.2 L42.8 18.5 V37.6 Q42.8 39.6 40.8 39.6 H19 Q17 39.6 17 37.6 V15.9 Q17 13.9 19 13.9 Z" fill="#dde1e6"/><rect x="21.7" y="15" width="16.4" height="8.6" rx="1" fill="#eceef2"/><rect x="33" y="16" width="3" height="6" fill="#cbd6e2"/><rect x="19.6" y="26.4" width="20.7" height="12.2" rx="1.5" fill="#eceef2"/></svg>
<div class="t" id="t79" style="top:279.07px;font-size:8.9px;color:#b7bcc3;font-weight:700;left:1225.00px;transform-origin:0 0;transform:translateX(-50%) scaleX(1.0136);transform-origin:50% 0;">F8</div>
<div class="a" style="left:1259px;top:233px;width:60px;height:60px;border:1px solid #9ca2aa;border-radius:4px;"></div>
<svg class="a" style="left:1259px;top:233px" width="60" height="60" viewBox="0 0 60 60"><circle cx="33.2" cy="23.6" r="8.5" fill="none" stroke="#6e7378" stroke-width="2.3"/><path d="M33.8 18.6 Q37.6 19.4 38.4 23.2" fill="none" stroke="#6e7378" stroke-width="1.1"/><path d="M20.2 36.8 L24 33" stroke="#00427f" stroke-width="5.2" stroke-linecap="round"/><path d="M22.5 34.5 L27 30" stroke="#00427f" stroke-width="5.2"/></svg>
<div class="t" id="t80" style="top:279.07px;font-size:8.9px;color:#111;font-weight:700;left:1289.00px;transform-origin:0 0;transform:translateX(-50%) scaleX(1.0136);transform-origin:50% 0;">F9</div>
<div class="a" style="left:1323px;top:233px;width:60px;height:60px;border:1px solid #9ca2aa;border-radius:4px;"></div>
<svg class="a" style="left:1323px;top:233px" width="60" height="60" viewBox="0 0 60 60"><path d="M22.5 14.5 H34.0 Q36.5 14.5 36.5 17.0 V38.0 Q36.5 40.5 34.0 40.5 H19.0 Q16.5 40.5 16.5 38.0 V20.5 Z" fill="#fff" stroke="#6e7378" stroke-width="2.4" stroke-linejoin="round"/><path d="M15.7 21.3 L23.3 13.7 V19.5 Q23.3 21.3 21.5 21.3 Z" fill="#6e7378"/><path d="M33 34.2 H43" stroke="#00427f" stroke-width="3" stroke-linecap="round"/><path d="M35 30.5 L28.5 34.2 L35 38 Z" fill="#00427f" stroke="#00427f" stroke-linejoin="round"/></svg>
<div class="t" id="t81" style="top:279.07px;font-size:8.9px;color:#111;font-weight:700;left:1353.00px;transform-origin:0 0;transform:translateX(-50%) scaleX(1.0002);transform-origin:50% 0;">F10</div>
<div class="a" style="left:1387px;top:233px;width:60px;height:60px;border:1px solid #cfd4da;border-radius:4px;"></div>
<svg class="a" style="left:1387px;top:233px" width="60" height="60" viewBox="0 0 60 60"><path d="M22 24.5 Q27 19.5 32 20 Q40 21.5 40 29 Q40 33.5 36.5 36.5" fill="none" stroke="#c9d5e1" stroke-width="3.6" stroke-linecap="round"/><path d="M18 17.5 L18.5 29 L28.5 25.5 Z" fill="#c9d5e1" stroke="#c9d5e1" stroke-linejoin="round"/></svg>
<div class="t" id="t82" style="top:279.07px;font-size:8.9px;color:#b7bcc3;font-weight:700;left:1417.00px;transform-origin:0 0;transform:translateX(-50%) scaleX(1.0329);transform-origin:50% 0;">F11</div>
<div class="a" style="left:1451px;top:233px;width:60px;height:60px;border:1px solid #9ca2aa;border-radius:4px;"></div>
<svg class="a" style="left:1451px;top:233px" width="60" height="60" viewBox="0 0 60 60"><path d="M33.5 20 V17 Q33.5 14.5 31 14.5 H18 Q15.5 14.5 15.5 17 V37.5 Q15.5 40 18 40 H31 Q33.5 40 33.5 37.5 V34.5" fill="none" stroke="#6e7378" stroke-width="2.4" stroke-linecap="round"/><path d="M27.5 27.5 H39" stroke="#00427f" stroke-width="3.4" stroke-linecap="round"/><path d="M38 22.5 L45 27.5 L38 32.5 Z" fill="#00427f" stroke="#00427f" stroke-width="1" stroke-linejoin="round"/></svg>
<div class="t" id="t83" style="top:279.07px;font-size:8.9px;color:#111;font-weight:700;left:1481.00px;transform-origin:0 0;transform:translateX(-50%) scaleX(1.0002);transform-origin:50% 0;">F12</div>
<div class="t" id="t84" style="top:326.90px;font-size:15px;color:#2b2b2b;left:564.80px;transform-origin:0 0;transform:scaleX(1.1188);">Order</div>
<div class="t" id="t85" style="top:326.90px;font-size:15px;color:#2b2b2b;left:1443.10px;transform-origin:0 0;transform:scaleX(1.0651);">Status</div>
<div class="t" id="t86" style="top:392.30px;font-size:15px;color:#2b2b2b;left:564.80px;transform-origin:0 0;transform:scaleX(1.1394);">Article</div>
<div class="t" id="t87" style="top:392.30px;font-size:15px;color:#2b2b2b;left:769.30px;transform-origin:0 0;transform:scaleX(1.1049);">Description</div>
<div class="t" id="t88" style="top:457.30px;font-size:15px;color:#2b2b2b;left:564.80px;transform-origin:0 0;transform:scaleX(1.0093);">Press</div>
<div class="t" id="t89" style="top:457.30px;font-size:15px;color:#2b2b2b;left:769.30px;transform-origin:0 0;transform:scaleX(1.1049);">Description</div>
<div class="t" id="t90" style="top:457.30px;font-size:15px;color:#2b2b2b;left:1165.00px;transform-origin:0 0;transform:scaleX(1.0704);">Scheduled</div>
<div class="t" id="t91" style="top:457.30px;font-size:15px;color:#2b2b2b;left:1445.30px;transform-origin:0 0;transform:scaleX(1.0847);">Entered</div>
<div class="t" id="t92" style="top:522.30px;font-size:15px;color:#2b2b2b;left:564.80px;transform-origin:0 0;transform:scaleX(1.0918);">Customer</div>
<div class="t" id="t93" style="top:522.30px;font-size:15px;color:#2b2b2b;left:769.30px;transform-origin:0 0;transform:scaleX(1.0871);">Name</div>
<div class="t" id="t94" style="top:522.30px;font-size:15px;color:#2b2b2b;left:1165.30px;transform-origin:0 0;transform:scaleX(1.1454);">Quantity</div>
<div class="t" id="t95" style="top:522.30px;font-size:15px;color:#2b2b2b;left:1305.30px;transform-origin:0 0;transform:scaleX(1.0869);">Produced</div>
<div class="t" id="t96" style="top:522.30px;font-size:15px;color:#2b2b2b;left:1445.30px;transform-origin:0 0;transform:scaleX(1.0342);">Closed</div>
<div class="a" style="left:565px;top:348px;width:194px;height:28px;background:#ffffff;border:1px solid #a6acb4;"></div>
<div class="a" style="left:1444px;top:348px;width:194px;height:28px;background:#ffffff;border:1px solid #a6acb4;"></div>
<div class="a" style="left:1447px;top:351px;width:188px;height:22px;background:#f0f2f5;"></div>
<div class="a" style="left:565px;top:413px;width:192px;height:28px;background:#ffffff;border:1px solid #a6acb4;"></div>
<div class="a" style="left:568px;top:416px;width:186px;height:22px;background:#f0f2f5;"></div>
<div class="a" style="left:769px;top:413px;width:665px;height:28px;background:#ffffff;border:1px solid #a6acb4;"></div>
<div class="a" style="left:772px;top:416px;width:659px;height:22px;background:#f0f2f5;"></div>
<div class="a" style="left:565px;top:478px;width:192px;height:28px;background:#ffffff;border:1px solid #a6acb4;"></div>
<div class="a" style="left:568px;top:481px;width:186px;height:22px;background:#f0f2f5;"></div>
<div class="a" style="left:769px;top:478px;width:385px;height:28px;background:#ffffff;border:1px solid #a6acb4;"></div>
<div class="a" style="left:772px;top:481px;width:379px;height:22px;background:#f0f2f5;"></div>
<div class="a" style="left:1166px;top:478px;width:268px;height:28px;background:#ffffff;border:1px solid #a6acb4;"></div>
<div class="a" style="left:1169px;top:481px;width:247px;height:22px;background:#f0f2f5;"></div>
<div class="a" style="left:1419px;top:479px;width:14px;height:26px;background:linear-gradient(#f1f2f5,#e3e5e9);"></div>
<div class="a" style="left:1418px;top:479px;width:1px;height:26px;background:#a6acb4;"></div>
<svg class="a" style="left:1422px;top:490px" width="8" height="4" viewBox="0 0 8 4"><path d="M0.5 0.5 H6.5 L3.5 3.2 Z" fill="#c3c7cd"/></svg>
<div class="a" style="left:1446px;top:478px;width:192px;height:28px;background:#ffffff;border:1px solid #a6acb4;"></div>
<div class="a" style="left:1449px;top:481px;width:171px;height:22px;background:#f0f2f5;"></div>
<div class="a" style="left:1623px;top:479px;width:14px;height:26px;background:linear-gradient(#f1f2f5,#e3e5e9);"></div>
<div class="a" style="left:1622px;top:479px;width:1px;height:26px;background:#a6acb4;"></div>
<svg class="a" style="left:1626px;top:490px" width="8" height="4" viewBox="0 0 8 4"><path d="M0.5 0.5 H6.5 L3.5 3.2 Z" fill="#c3c7cd"/></svg>
<div class="a" style="left:565px;top:543px;width:192px;height:28px;background:#ffffff;border:1px solid #a6acb4;"></div>
<div class="a" style="left:568px;top:546px;width:186px;height:22px;background:#f0f2f5;"></div>
<div class="a" style="left:769px;top:543px;width:385px;height:28px;background:#ffffff;border:1px solid #a6acb4;"></div>
<div class="a" style="left:772px;top:546px;width:379px;height:22px;background:#f0f2f5;"></div>
<div class="a" style="left:1166px;top:543px;width:128px;height:28px;background:#ffffff;border:1px solid #a6acb4;"></div>
<div class="a" style="left:1169px;top:546px;width:122px;height:22px;background:#f0f2f5;"></div>
<div class="a" style="left:1306px;top:543px;width:128px;height:28px;background:#ffffff;border:1px solid #a6acb4;"></div>
<div class="a" style="left:1309px;top:546px;width:122px;height:22px;background:#f0f2f5;"></div>
<div class="a" style="left:1446px;top:543px;width:192px;height:28px;background:#ffffff;border:1px solid #a6acb4;"></div>
<div class="a" style="left:1449px;top:546px;width:171px;height:22px;background:#f0f2f5;"></div>
<div class="a" style="left:1623px;top:544px;width:14px;height:26px;background:linear-gradient(#f1f2f5,#e3e5e9);"></div>
<div class="a" style="left:1622px;top:544px;width:1px;height:26px;background:#a6acb4;"></div>
<svg class="a" style="left:1626px;top:555px" width="8" height="4" viewBox="0 0 8 4"><path d="M0.5 0.5 H6.5 L3.5 3.2 Z" fill="#c3c7cd"/></svg>
<div class="t" id="t97" style="top:354.96px;font-size:15.4px;color:#2b2b2b;left:570.00px;transform-origin:0 0;transform:scaleX(1.0636);">2018-06-12-0001</div>
<div class="t" id="t98" style="top:354.96px;font-size:15.4px;color:#2b2b2b;left:1448.50px;transform-origin:0 0;transform:scaleX(1.0630);">Entered</div>
<div class="t" id="t99" style="top:419.96px;font-size:15.4px;color:#2b2b2b;left:569.80px;transform-origin:0 0;transform:scaleX(1.0857);">Article_001</div>
<div class="t" id="t100" style="top:419.96px;font-size:15.4px;color:#2b2b2b;left:773.60px;transform-origin:0 0;transform:scaleX(1.0663);">Spring flower design</div>
<div class="t" id="t101" style="top:484.96px;font-size:15.4px;color:#2b2b2b;left:569.80px;transform-origin:0 0;transform:scaleX(1.0573);">Printing press</div>
<div class="t" id="t102" style="top:484.96px;font-size:15.4px;color:#2b2b2b;left:773.60px;transform-origin:0 0;transform:scaleX(1.0875);">Full color</div>
<div class="t" id="t103" style="top:484.96px;font-size:15.4px;color:#2b2b2b;left:1170.50px;transform-origin:0 0;transform:scaleX(1.0663);">14-06-2018 08:15:00</div>
<div class="t" id="t104" style="top:484.96px;font-size:15.4px;color:#2b2b2b;left:1450.50px;transform-origin:0 0;transform:scaleX(1.0684);">12-06-2018 10:15:06</div>
<div class="t" id="t105" style="top:549.96px;font-size:15.4px;color:#2b2b2b;left:569.80px;transform-origin:0 0;transform:scaleX(0.8611);">GSE</div>
<div class="t" id="t106" style="top:549.96px;font-size:15.4px;color:#2b2b2b;left:773.60px;transform-origin:0 0;">GSE Dispensing</div>
<div class="t" id="t107" style="top:549.96px;font-size:15.4px;color:#2b2b2b;right:391.30px;transform-origin:100% 0;transform:scaleX(1.0614);">18,900.0</div>
<div class="t" id="t108" style="top:549.96px;font-size:15.4px;color:#2b2b2b;right:251.00px;transform-origin:100% 0;transform:scaleX(1.0745);">0.0</div>
<div class="a" style="left:565px;top:583px;width:1073px;height:342px;background:#e9ecf0;border:1px solid #a9aeb6;border-radius:3px;"></div>
<div class="a" style="left:566px;top:584px;width:1071px;height:26px;background:#e2e6ec;"></div>
<div class="a" style="left:566px;top:610px;width:1071px;height:1px;background:#b9bec6;"></div>
<div class="t" id="t109" style="top:590.20px;font-size:15px;color:#2b2b2b;left:576.70px;transform-origin:0 0;transform:scaleX(1.0926);">The order consists of order lines</div>
<div class="a" style="left:566px;top:611px;width:1071px;height:50px;background:#edf0f3;"></div>
<div class="a" style="left:566px;top:661px;width:1071px;height:1px;background:#b9bec6;"></div>
<div class="a" style="left:581px;top:611px;width:1px;height:51px;background:#c4c9d0;"></div>
<div class="a" style="left:597px;top:611px;width:1px;height:51px;background:#c4c9d0;"></div>
<div class="a" style="left:647px;top:611px;width:1px;height:51px;background:#c4c9d0;"></div>
<div class="a" style="left:718px;top:611px;width:1px;height:51px;background:#c4c9d0;"></div>
<div class="a" style="left:806px;top:611px;width:1px;height:51px;background:#c4c9d0;"></div>
<div class="a" style="left:889px;top:611px;width:1px;height:51px;background:#c4c9d0;"></div>
<div class="a" style="left:1014px;top:611px;width:1px;height:51px;background:#c4c9d0;"></div>
<div class="a" style="left:1030px;top:611px;width:1px;height:51px;background:#c4c9d0;"></div>
<div class="a" style="left:1124px;top:611px;width:1px;height:51px;background:#c4c9d0;"></div>
<div class="a" style="left:1192px;top:611px;width:1px;height:51px;background:#c4c9d0;"></div>
<div class="a" style="left:1311px;top:611px;width:1px;height:51px;background:#c4c9d0;"></div>
<div class="a" style="left:1377px;top:611px;width:1px;height:51px;background:#c4c9d0;"></div>
<div class="a" style="left:1444px;top:611px;width:1px;height:51px;background:#c4c9d0;"></div>
<div class="a" style="left:1531px;top:611px;width:1px;height:51px;background:#c4c9d0;"></div>
<div class="t" id="t110" style="top:629.00px;font-size:15px;color:#6d7177;left:602.00px;transform-origin:0 0;transform:scaleX(1.0710);">No.</div>
<svg class="a" style="left:633px;top:633px" width="10" height="6" viewBox="0 0 10 6"><path d="M0.5 5.5 L5 1 L9.5 5.5 Z" fill="#b7bcc3"/></svg>
<div class="t" id="t111" style="top:618.00px;font-size:15px;color:#6d7177;left:652.00px;transform-origin:0 0;">Press</div>
<div class="t" id="t112" style="top:639.90px;font-size:15px;color:#6d7177;left:652.00px;transform-origin:0 0;transform:scaleX(1.1353);">position</div>
<div class="t" id="t113" style="top:629.00px;font-size:15px;color:#6d7177;right:878.00px;transform-origin:100% 0;transform:scaleX(1.1097);">Fill weight</div>
<div class="t" id="t114" style="top:629.00px;font-size:15px;color:#6d7177;left:810.90px;transform-origin:0 0;transform:scaleX(1.0924);">Formula</div>
<div class="t" id="t115" style="top:629.00px;font-size:15px;color:#6d7177;left:893.90px;transform-origin:0 0;transform:scaleX(1.0921);">Name</div>
<div class="t" id="t116" style="top:618.00px;font-size:15px;color:#6d7177;left:1054.00px;transform-origin:0 0;transform:scaleX(1.0793);">Required</div>
<div class="t" id="t117" style="top:639.90px;font-size:15px;color:#6d7177;left:1054.00px;transform-origin:0 0;transform:scaleX(1.1416);">weight</div>
<div class="t" id="t118" style="top:629.00px;font-size:15px;color:#6d7177;right:492.10px;transform-origin:100% 0;transform:scaleX(1.0589);">Price</div>
<div class="t" id="t119" style="top:629.00px;font-size:15px;color:#6d7177;left:1196.40px;transform-origin:0 0;transform:scaleX(1.0961);">Container</div>
<div class="t" id="t120" style="top:629.00px;font-size:15px;color:#6d7177;left:1316.00px;transform-origin:0 0;transform:scaleX(1.0679);">Returns</div>
<div class="t" id="t121" style="top:629.00px;font-size:15px;color:#6d7177;left:1381.80px;transform-origin:0 0;transform:scaleX(1.0506);">Clusters</div>
<div class="t" id="t122" style="top:629.00px;font-size:15px;color:#6d7177;left:1448.60px;transform-origin:0 0;transform:scaleX(1.0961);">Container</div>
<div class="a" style="left:566px;top:662px;width:1071px;height:225px;background:#f8f9fb;"></div>
<div class="a" style="left:566px;top:662px;width:15px;height:218px;background:#e9ecf0;"></div>
<div class="a" style="left:581px;top:662px;width:1px;height:218px;background:#c4c9d0;"></div>
<div class="a" style="left:1620px;top:662px;width:17px;height:225px;background:#f0f1f4;"></div>
<svg class="a" style="left:1623px;top:667px" width="11" height="7" viewBox="0 0 11 7"><path d="M0.5 6 L5.5 1 L10.5 6 Z" fill="#aeb3ba"/></svg>
<svg class="a" style="left:1623px;top:874px" width="11" height="7" viewBox="0 0 11 7"><path d="M0.5 1 L5.5 6 L10.5 1 Z" fill="#aeb3ba"/></svg>
<div class="a" style="left:566px;top:887px;width:1071px;height:1px;background:#b9bec6;"></div>
<div class="a" style="left:566px;top:688px;width:1054px;height:1px;background:#dde0e5;"></div>
<div class="a" style="left:647px;top:662px;width:1px;height:26px;background:#dde0e5;"></div>
<div class="a" style="left:718px;top:662px;width:1px;height:26px;background:#dde0e5;"></div>
<div class="a" style="left:806px;top:662px;width:1px;height:26px;background:#dde0e5;"></div>
<div class="a" style="left:889px;top:662px;width:1px;height:26px;background:#dde0e5;"></div>
<div class="a" style="left:1014px;top:662px;width:1px;height:26px;background:#dde0e5;"></div>
<div class="a" style="left:1030px;top:662px;width:1px;height:26px;background:#dde0e5;"></div>
<div class="a" style="left:1124px;top:662px;width:1px;height:26px;background:#dde0e5;"></div>
<div class="a" style="left:1192px;top:662px;width:1px;height:26px;background:#dde0e5;"></div>
<div class="a" style="left:1311px;top:662px;width:1px;height:26px;background:#dde0e5;"></div>
<div class="a" style="left:1377px;top:662px;width:1px;height:26px;background:#dde0e5;"></div>
<div class="a" style="left:1444px;top:662px;width:1px;height:26px;background:#dde0e5;"></div>
<div class="a" style="left:1531px;top:662px;width:1px;height:26px;background:#dde0e5;"></div>
<div class="a" style="left:1015px;top:662px;width:15px;height:26px;background:#f7b544;"></div>
<svg class="a" style="left:586px;top:671px" width="11" height="11" viewBox="0 0 11 11"><rect x="1" y="1" width="9" height="9" fill="#dfe2e6"/><rect x="0.5" y="0.5" width="8.6" height="8.6" fill="#fafbfc" stroke="#9ea3ab"/><path d="M2.3 4.8 H7.3 M4.8 2.3 V7.3" stroke="#7d828a" stroke-width="0.9"/></svg>
<div class="t" id="t123" style="top:668.00px;font-size:15px;color:#2b2b2b;right:1037.30px;transform-origin:100% 0;transform:scaleX(1.0850);">1</div>
<div class="t" id="t124" style="top:668.00px;font-size:15px;color:#2b2b2b;right:966.30px;transform-origin:100% 0;transform:scaleX(1.0850);">1</div>
<div class="t" id="t125" style="top:668.00px;font-size:15px;color:#2b2b2b;right:878.00px;transform-origin:100% 0;transform:scaleX(1.0850);">2.0000</div>
<div class="t" id="t126" style="top:668.00px;font-size:15px;color:#2b2b2b;left:810.90px;transform-origin:0 0;transform:scaleX(1.0946);">144</div>
<div class="t" id="t127" style="top:668.00px;font-size:15px;color:#2b2b2b;left:893.90px;transform-origin:0 0;transform:scaleX(1.0581);">Orange shade</div>
<div class="t" id="t128" style="top:668.00px;font-size:15px;color:#2b2b2b;right:559.90px;transform-origin:100% 0;transform:scaleX(1.0850);">3.8900</div>
<div class="t" id="t129" style="top:668.00px;font-size:15px;color:#2b2b2b;right:492.10px;transform-origin:100% 0;transform:scaleX(1.0920);">98.73</div>
<div class="t" id="t130" style="top:668.00px;font-size:15px;color:#2b2b2b;left:1196.40px;transform-origin:0 0;transform:scaleX(1.0844);">5 kg Container</div>
<svg class="a" style="left:1338px;top:668px" width="14" height="14" viewBox="0 0 14 14"><rect x="0.5" y="0.5" width="13" height="13" fill="#fff" stroke="#a9afb8"/><rect x="2.5" y="2.5" width="9" height="9" fill="none" stroke="#dcdfe4"/><path d="M3.3 7.5 L5.6 10.6 L10 3.4" fill="none" stroke="#8f949c" stroke-width="1.3"/></svg>
<svg class="a" style="left:1404px;top:668px" width="14" height="14" viewBox="0 0 14 14"><rect x="0.5" y="0.5" width="13" height="13" fill="#fff" stroke="#a9afb8"/><rect x="2.5" y="2.5" width="9" height="9" fill="none" stroke="#dcdfe4"/><path d="M3.3 7.5 L5.6 10.6 L10 3.4" fill="none" stroke="#8f949c" stroke-width="1.3"/></svg>
<div class="t" id="t131" style="top:668.00px;font-size:15px;color:#2b2b2b;right:153.30px;transform-origin:100% 0;transform:scaleX(1.0876);">4103</div>
<div class="a" style="left:582px;top:689px;width:1038px;height:26px;background:#f5e8ae;"></div>
<div class="a" style="left:648px;top:689px;width:70px;height:26px;background:#f7f0d2;"></div>
<svg class="a" style="left:571px;top:698px" width="5" height="9" viewBox="0 0 5 9"><path d="M0.5 0.5 L4.5 4.5 L0.5 8.5 Z" fill="#9da2a9"/></svg>
<div class="a" style="left:566px;top:715px;width:1054px;height:1px;background:#dde0e5;"></div>
<div class="a" style="left:647px;top:689px;width:1px;height:26px;background:#dde0e5;"></div>
<div class="a" style="left:718px;top:689px;width:1px;height:26px;background:#dde0e5;"></div>
<div class="a" style="left:806px;top:689px;width:1px;height:26px;background:#dde0e5;"></div>
<div class="a" style="left:889px;top:689px;width:1px;height:26px;background:#dde0e5;"></div>
<div class="a" style="left:1014px;top:689px;width:1px;height:26px;background:#dde0e5;"></div>
<div class="a" style="left:1030px;top:689px;width:1px;height:26px;background:#dde0e5;"></div>
<div class="a" style="left:1124px;top:689px;width:1px;height:26px;background:#dde0e5;"></div>
<div class="a" style="left:1192px;top:689px;width:1px;height:26px;background:#dde0e5;"></div>
<div class="a" style="left:1311px;top:689px;width:1px;height:26px;background:#dde0e5;"></div>
<div class="a" style="left:1377px;top:689px;width:1px;height:26px;background:#dde0e5;"></div>
<div class="a" style="left:1444px;top:689px;width:1px;height:26px;background:#dde0e5;"></div>
<div class="a" style="left:1531px;top:689px;width:1px;height:26px;background:#dde0e5;"></div>
<div class="a" style="left:1015px;top:689px;width:15px;height:26px;background:#f34545;"></div>
<svg class="a" style="left:586px;top:698px" width="11" height="11" viewBox="0 0 11 11"><rect x="1" y="1" width="9" height="9" fill="#dfe2e6"/><rect x="0.5" y="0.5" width="8.6" height="8.6" fill="#fafbfc" stroke="#9ea3ab"/><path d="M2.3 4.8 H7.3" stroke="#7d828a" stroke-width="0.9"/></svg>
<div class="t" id="t132" style="top:695.00px;font-size:15px;color:#2b2b2b;right:1037.30px;transform-origin:100% 0;transform:scaleX(1.0850);">2</div>
<div class="t" id="t133" style="top:695.00px;font-size:15px;color:#2b2b2b;right:966.30px;transform-origin:100% 0;transform:scaleX(1.0850);">3</div>
<div class="t" id="t134" style="top:695.00px;font-size:15px;color:#2b2b2b;right:878.00px;transform-origin:100% 0;transform:scaleX(1.0850);">2.0000</div>
<div class="t" id="t135" style="top:695.00px;font-size:15px;color:#2b2b2b;left:810.90px;transform-origin:0 0;transform:scaleX(1.0850);">032</div>
<div class="t" id="t136" style="top:695.00px;font-size:15px;color:#2b2b2b;left:893.90px;transform-origin:0 0;transform:scaleX(1.0432);">Red shade</div>
<div class="t" id="t137" style="top:695.00px;font-size:15px;color:#2b2b2b;right:559.90px;transform-origin:100% 0;transform:scaleX(1.0850);">7.6700</div>
<div class="t" id="t138" style="top:695.00px;font-size:15px;color:#2b2b2b;right:492.10px;transform-origin:100% 0;transform:scaleX(1.0830);">168.36</div>
<div class="t" id="t139" style="top:695.00px;font-size:15px;color:#2b2b2b;left:1196.40px;transform-origin:0 0;transform:scaleX(1.0844);">5 kg Container</div>
<svg class="a" style="left:1338px;top:695px" width="14" height="14" viewBox="0 0 14 14"><rect x="0.5" y="0.5" width="13" height="13" fill="#fff" stroke="#a9afb8"/><rect x="2.5" y="2.5" width="9" height="9" fill="none" stroke="#dcdfe4"/><path d="M3.3 7.5 L5.6 10.6 L10 3.4" fill="none" stroke="#8f949c" stroke-width="1.3"/></svg>
<svg class="a" style="left:1404px;top:695px" width="14" height="14" viewBox="0 0 14 14"><rect x="0.5" y="0.5" width="13" height="13" fill="#fff" stroke="#a9afb8"/><rect x="2.5" y="2.5" width="9" height="9" fill="none" stroke="#dcdfe4"/><path d="M3.3 7.5 L5.6 10.6 L10 3.4" fill="none" stroke="#8f949c" stroke-width="1.3"/></svg>
<div class="t" id="t140" style="top:695.00px;font-size:15px;color:#2b2b2b;right:153.30px;transform-origin:100% 0;transform:scaleX(1.0876);">4104</div>
<div class="a" style="left:566px;top:825px;width:1054px;height:1px;background:#dde0e5;"></div>
<div class="a" style="left:647px;top:799px;width:1px;height:26px;background:#dde0e5;"></div>
<div class="a" style="left:718px;top:799px;width:1px;height:26px;background:#dde0e5;"></div>
<div class="a" style="left:806px;top:799px;width:1px;height:26px;background:#dde0e5;"></div>
<div class="a" style="left:889px;top:799px;width:1px;height:26px;background:#dde0e5;"></div>
<div class="a" style="left:1014px;top:799px;width:1px;height:26px;background:#dde0e5;"></div>
<div class="a" style="left:1030px;top:799px;width:1px;height:26px;background:#dde0e5;"></div>
<div class="a" style="left:1124px;top:799px;width:1px;height:26px;background:#dde0e5;"></div>
<div class="a" style="left:1192px;top:799px;width:1px;height:26px;background:#dde0e5;"></div>
<div class="a" style="left:1311px;top:799px;width:1px;height:26px;background:#dde0e5;"></div>
<div class="a" style="left:1377px;top:799px;width:1px;height:26px;background:#dde0e5;"></div>
<div class="a" style="left:1444px;top:799px;width:1px;height:26px;background:#dde0e5;"></div>
<div class="a" style="left:1531px;top:799px;width:1px;height:26px;background:#dde0e5;"></div>
<div class="a" style="left:1015px;top:799px;width:15px;height:26px;background:#4242f2;"></div>
<svg class="a" style="left:586px;top:808px" width="11" height="11" viewBox="0 0 11 11"><rect x="1" y="1" width="9" height="9" fill="#dfe2e6"/><rect x="0.5" y="0.5" width="8.6" height="8.6" fill="#fafbfc" stroke="#9ea3ab"/><path d="M2.3 4.8 H7.3 M4.8 2.3 V7.3" stroke="#7d828a" stroke-width="0.9"/></svg>
<div class="t" id="t141" style="top:805.00px;font-size:15px;color:#2b2b2b;right:1037.30px;transform-origin:100% 0;transform:scaleX(1.0850);">3</div>
<div class="t" id="t142" style="top:805.00px;font-size:15px;color:#2b2b2b;right:966.30px;transform-origin:100% 0;transform:scaleX(1.0850);">5</div>
<div class="t" id="t143" style="top:805.00px;font-size:15px;color:#2b2b2b;right:878.00px;transform-origin:100% 0;transform:scaleX(1.0850);">2.0000</div>
<div class="t" id="t144" style="top:805.00px;font-size:15px;color:#2b2b2b;left:810.90px;transform-origin:0 0;transform:scaleX(1.0757);">2995</div>
<div class="t" id="t145" style="top:805.00px;font-size:15px;color:#2b2b2b;left:893.90px;transform-origin:0 0;transform:scaleX(1.0698);">Blue shade</div>
<div class="t" id="t146" style="top:805.00px;font-size:15px;color:#2b2b2b;right:559.90px;transform-origin:100% 0;transform:scaleX(1.0850);">4.2680</div>
<div class="t" id="t147" style="top:805.00px;font-size:15px;color:#2b2b2b;right:492.10px;transform-origin:100% 0;transform:scaleX(1.0850);">68.80</div>
<div class="t" id="t148" style="top:805.00px;font-size:15px;color:#2b2b2b;left:1196.40px;transform-origin:0 0;transform:scaleX(1.0844);">5 kg Container</div>
<svg class="a" style="left:1338px;top:805px" width="14" height="14" viewBox="0 0 14 14"><rect x="0.5" y="0.5" width="13" height="13" fill="#fff" stroke="#a9afb8"/><rect x="2.5" y="2.5" width="9" height="9" fill="none" stroke="#dcdfe4"/><path d="M3.3 7.5 L5.6 10.6 L10 3.4" fill="none" stroke="#8f949c" stroke-width="1.3"/></svg>
<svg class="a" style="left:1404px;top:805px" width="14" height="14" viewBox="0 0 14 14"><rect x="0.5" y="0.5" width="13" height="13" fill="#fff" stroke="#a9afb8"/><rect x="2.5" y="2.5" width="9" height="9" fill="none" stroke="#dcdfe4"/><path d="M3.3 7.5 L5.6 10.6 L10 3.4" fill="none" stroke="#8f949c" stroke-width="1.3"/></svg>
<div class="t" id="t149" style="top:805.00px;font-size:15px;color:#2b2b2b;right:153.30px;transform-origin:100% 0;transform:scaleX(1.0876);">4105</div>
<div class="a" style="left:566px;top:852px;width:1054px;height:1px;background:#dde0e5;"></div>
<div class="a" style="left:647px;top:826px;width:1px;height:26px;background:#dde0e5;"></div>
<div class="a" style="left:718px;top:826px;width:1px;height:26px;background:#dde0e5;"></div>
<div class="a" style="left:806px;top:826px;width:1px;height:26px;background:#dde0e5;"></div>
<div class="a" style="left:889px;top:826px;width:1px;height:26px;background:#dde0e5;"></div>
<div class="a" style="left:1014px;top:826px;width:1px;height:26px;background:#dde0e5;"></div>
<div class="a" style="left:1030px;top:826px;width:1px;height:26px;background:#dde0e5;"></div>
<div class="a" style="left:1124px;top:826px;width:1px;height:26px;background:#dde0e5;"></div>
<div class="a" style="left:1192px;top:826px;width:1px;height:26px;background:#dde0e5;"></div>
<div class="a" style="left:1311px;top:826px;width:1px;height:26px;background:#dde0e5;"></div>
<div class="a" style="left:1377px;top:826px;width:1px;height:26px;background:#dde0e5;"></div>
<div class="a" style="left:1444px;top:826px;width:1px;height:26px;background:#dde0e5;"></div>
<div class="a" style="left:1531px;top:826px;width:1px;height:26px;background:#dde0e5;"></div>
<div class="a" style="left:1015px;top:826px;width:15px;height:26px;background:#3f9c44;"></div>
<svg class="a" style="left:586px;top:835px" width="11" height="11" viewBox="0 0 11 11"><rect x="1" y="1" width="9" height="9" fill="#dfe2e6"/><rect x="0.5" y="0.5" width="8.6" height="8.6" fill="#fafbfc" stroke="#9ea3ab"/><path d="M2.3 4.8 H7.3 M4.8 2.3 V7.3" stroke="#7d828a" stroke-width="0.9"/></svg>
<div class="t" id="t150" style="top:832.00px;font-size:15px;color:#2b2b2b;right:1037.30px;transform-origin:100% 0;transform:scaleX(1.0850);">4</div>
<div class="t" id="t151" style="top:832.00px;font-size:15px;color:#2b2b2b;right:966.30px;transform-origin:100% 0;transform:scaleX(1.0850);">2</div>
<div class="t" id="t152" style="top:832.00px;font-size:15px;color:#2b2b2b;right:878.00px;transform-origin:100% 0;transform:scaleX(1.0850);">2.0000</div>
<div class="t" id="t153" style="top:832.00px;font-size:15px;color:#2b2b2b;left:810.90px;transform-origin:0 0;transform:scaleX(1.0850);">340</div>
<div class="t" id="t154" style="top:832.00px;font-size:15px;color:#2b2b2b;left:893.90px;transform-origin:0 0;transform:scaleX(1.0665);">Green shade</div>
<div class="t" id="t155" style="top:832.00px;font-size:15px;color:#2b2b2b;right:559.90px;transform-origin:100% 0;transform:scaleX(1.0850);">17.1200</div>
<div class="t" id="t156" style="top:832.00px;font-size:15px;color:#2b2b2b;right:492.10px;transform-origin:100% 0;transform:scaleX(1.0850);">404.37</div>
<div class="t" id="t157" style="top:832.00px;font-size:15px;color:#2b2b2b;left:1196.40px;transform-origin:0 0;transform:scaleX(1.0844);">5 kg Container</div>
<svg class="a" style="left:1338px;top:832px" width="14" height="14" viewBox="0 0 14 14"><rect x="0.5" y="0.5" width="13" height="13" fill="#fff" stroke="#a9afb8"/><rect x="2.5" y="2.5" width="9" height="9" fill="none" stroke="#dcdfe4"/><path d="M3.3 7.5 L5.6 10.6 L10 3.4" fill="none" stroke="#8f949c" stroke-width="1.3"/></svg>
<svg class="a" style="left:1404px;top:832px" width="14" height="14" viewBox="0 0 14 14"><rect x="0.5" y="0.5" width="13" height="13" fill="#fff" stroke="#a9afb8"/><rect x="2.5" y="2.5" width="9" height="9" fill="none" stroke="#dcdfe4"/><path d="M3.3 7.5 L5.6 10.6 L10 3.4" fill="none" stroke="#8f949c" stroke-width="1.3"/></svg>
<div class="t" id="t158" style="top:832.00px;font-size:15px;color:#2b2b2b;right:153.30px;transform-origin:100% 0;transform:scaleX(1.0876);">4106</div>
<div class="a" style="left:566px;top:879px;width:1054px;height:1px;background:#dde0e5;"></div>
<div class="a" style="left:647px;top:853px;width:1px;height:26px;background:#dde0e5;"></div>
<div class="a" style="left:718px;top:853px;width:1px;height:26px;background:#dde0e5;"></div>
<div class="a" style="left:806px;top:853px;width:1px;height:26px;background:#dde0e5;"></div>
<div class="a" style="left:889px;top:853px;width:1px;height:26px;background:#dde0e5;"></div>
<div class="a" style="left:1014px;top:853px;width:1px;height:26px;background:#dde0e5;"></div>
<div class="a" style="left:1030px;top:853px;width:1px;height:26px;background:#dde0e5;"></div>
<div class="a" style="left:1124px;top:853px;width:1px;height:26px;background:#dde0e5;"></div>
<div class="a" style="left:1192px;top:853px;width:1px;height:26px;background:#dde0e5;"></div>
<div class="a" style="left:1311px;top:853px;width:1px;height:26px;background:#dde0e5;"></div>
<div class="a" style="left:1377px;top:853px;width:1px;height:26px;background:#dde0e5;"></div>
<div class="a" style="left:1444px;top:853px;width:1px;height:26px;background:#dde0e5;"></div>
<div class="a" style="left:1531px;top:853px;width:1px;height:26px;background:#dde0e5;"></div>
<svg class="a" style="left:586px;top:862px" width="11" height="11" viewBox="0 0 11 11"><rect x="1" y="1" width="9" height="9" fill="#dfe2e6"/><rect x="0.5" y="0.5" width="8.6" height="8.6" fill="#fafbfc" stroke="#9ea3ab"/><path d="M2.3 4.8 H7.3 M4.8 2.3 V7.3" stroke="#7d828a" stroke-width="0.9"/></svg>
<div class="t" id="t159" style="top:859.00px;font-size:15px;color:#2b2b2b;right:1037.30px;transform-origin:100% 0;transform:scaleX(1.0850);">5</div>
<div class="t" id="t160" style="top:859.00px;font-size:15px;color:#2b2b2b;right:966.30px;transform-origin:100% 0;transform:scaleX(1.0850);">4</div>
<div class="t" id="t161" style="top:859.00px;font-size:15px;color:#2b2b2b;right:878.00px;transform-origin:100% 0;transform:scaleX(1.0850);">2.0000</div>
<div class="t" id="t162" style="top:859.00px;font-size:15px;color:#2b2b2b;left:810.90px;transform-origin:0 0;transform:scaleX(1.0886);">Topcoat</div>
<div class="t" id="t163" style="top:859.00px;font-size:15px;color:#2b2b2b;left:893.90px;transform-origin:0 0;transform:scaleX(1.0812);">Coating</div>
<div class="t" id="t164" style="top:859.00px;font-size:15px;color:#2b2b2b;right:559.90px;transform-origin:100% 0;transform:scaleX(1.0850);">20.9000</div>
<div class="t" id="t165" style="top:859.00px;font-size:15px;color:#2b2b2b;right:492.10px;transform-origin:100% 0;transform:scaleX(1.0850);">0.00</div>
<div class="t" id="t166" style="top:859.00px;font-size:15px;color:#2b2b2b;left:1196.40px;transform-origin:0 0;transform:scaleX(1.0844);">5 kg Container</div>
<svg class="a" style="left:1338px;top:859px" width="14" height="14" viewBox="0 0 14 14"><rect x="0.5" y="0.5" width="13" height="13" fill="#fff" stroke="#a9afb8"/><rect x="2.5" y="2.5" width="9" height="9" fill="none" stroke="#dcdfe4"/><path d="M3.3 7.5 L5.6 10.6 L10 3.4" fill="none" stroke="#8f949c" stroke-width="1.3"/></svg>
<svg class="a" style="left:1404px;top:859px" width="14" height="14" viewBox="0 0 14 14"><rect x="0.5" y="0.5" width="13" height="13" fill="#fff" stroke="#a9afb8"/><rect x="2.5" y="2.5" width="9" height="9" fill="none" stroke="#dcdfe4"/><path d="M3.3 7.5 L5.6 10.6 L10 3.4" fill="none" stroke="#8f949c" stroke-width="1.3"/></svg>
<div class="t" id="t167" style="top:859.00px;font-size:15px;color:#2b2b2b;right:153.30px;transform-origin:100% 0;transform:scaleX(1.0876);">4107</div>
<div class="a" style="left:566px;top:688px;width:15px;height:1px;background:#c9ced5;"></div>
<div class="a" style="left:566px;top:715px;width:15px;height:1px;background:#c9ced5;"></div>
<div class="a" style="left:566px;top:744px;width:15px;height:1px;background:#c9ced5;"></div>
<div class="a" style="left:566px;top:771px;width:15px;height:1px;background:#c9ced5;"></div>
<div class="a" style="left:566px;top:798px;width:15px;height:1px;background:#c9ced5;"></div>
<div class="a" style="left:566px;top:825px;width:15px;height:1px;background:#c9ced5;"></div>
<div class="a" style="left:566px;top:852px;width:15px;height:1px;background:#c9ced5;"></div>
<div class="a" style="left:566px;top:879px;width:15px;height:1px;background:#c9ced5;"></div>
<div class="a" style="left:582px;top:716px;width:16px;height:83px;background:#f8f9fb;"></div>
<div class="a" style="left:598px;top:716px;width:1022px;height:28px;background:#edf0f3;"></div>
<div class="a" style="left:598px;top:744px;width:1022px;height:1px;background:#b9bec6;"></div>
<div class="a" style="left:597px;top:716px;width:1px;height:29px;background:#c4c9d0;"></div>
<div class="a" style="left:666px;top:716px;width:1px;height:29px;background:#c4c9d0;"></div>
<div class="a" style="left:803px;top:716px;width:1px;height:29px;background:#c4c9d0;"></div>
<div class="a" style="left:941px;top:716px;width:1px;height:29px;background:#c4c9d0;"></div>
<div class="a" style="left:1077px;top:716px;width:1px;height:29px;background:#c4c9d0;"></div>
<div class="a" style="left:1246px;top:716px;width:1px;height:29px;background:#c4c9d0;"></div>
<div class="t" id="t168" style="top:722.70px;font-size:15px;color:#6d7177;left:601.30px;transform-origin:0 0;transform:scaleX(1.1089);">Index</div>
<div class="t" id="t169" style="top:722.70px;font-size:15px;color:#6d7177;left:670.50px;transform-origin:0 0;transform:scaleX(1.1005);">Required weight</div>
<div class="t" id="t170" style="top:722.70px;font-size:15px;color:#6d7177;left:808.60px;transform-origin:0 0;transform:scaleX(1.0636);">Dispensed</div>
<div class="t" id="t171" style="top:722.70px;font-size:15px;color:#6d7177;left:945.80px;transform-origin:0 0;transform:scaleX(1.1105);">Returned weight</div>
<div class="t" id="t172" style="top:722.70px;font-size:15px;color:#6d7177;left:1082.60px;transform-origin:0 0;transform:scaleX(1.0675);">Status</div>
<div class="a" style="left:598px;top:771px;width:1022px;height:1px;background:#dde0e5;"></div>
<div class="a" style="left:597px;top:745px;width:1px;height:26px;background:#dde0e5;"></div>
<div class="a" style="left:666px;top:745px;width:1px;height:26px;background:#dde0e5;"></div>
<div class="a" style="left:803px;top:745px;width:1px;height:26px;background:#dde0e5;"></div>
<div class="a" style="left:941px;top:745px;width:1px;height:26px;background:#dde0e5;"></div>
<div class="a" style="left:1077px;top:745px;width:1px;height:26px;background:#dde0e5;"></div>
<div class="a" style="left:1246px;top:745px;width:1px;height:26px;background:#dde0e5;"></div>
<div class="t" id="t173" style="top:751.00px;font-size:15px;color:#2b2b2b;right:1018.30px;transform-origin:100% 0;transform:scaleX(1.0850);">1</div>
<div class="t" id="t174" style="top:751.00px;font-size:15px;color:#2b2b2b;right:880.00px;transform-origin:100% 0;transform:scaleX(1.0850);">5.0000</div>
<div class="t" id="t175" style="top:751.00px;font-size:15px;color:#2b2b2b;right:742.90px;transform-origin:100% 0;transform:scaleX(1.0850);">0.0000</div>
<div class="t" id="t176" style="top:751.00px;font-size:15px;color:#2b2b2b;right:605.80px;transform-origin:100% 0;transform:scaleX(1.0850);">0.0000</div>
<div class="t" id="t177" style="top:751.00px;font-size:15px;color:#2b2b2b;left:1083.00px;transform-origin:0 0;transform:scaleX(1.1320);">Waiting</div>
<div class="a" style="left:598px;top:798px;width:1022px;height:1px;background:#dde0e5;"></div>
<div class="a" style="left:597px;top:772px;width:1px;height:26px;background:#dde0e5;"></div>
<div class="a" style="left:666px;top:772px;width:1px;height:26px;background:#dde0e5;"></div>
<div class="a" style="left:803px;top:772px;width:1px;height:26px;background:#dde0e5;"></div>
<div class="a" style="left:941px;top:772px;width:1px;height:26px;background:#dde0e5;"></div>
<div class="a" style="left:1077px;top:772px;width:1px;height:26px;background:#dde0e5;"></div>
<div class="a" style="left:1246px;top:772px;width:1px;height:26px;background:#dde0e5;"></div>
<div class="t" id="t178" style="top:778.00px;font-size:15px;color:#2b2b2b;right:1018.30px;transform-origin:100% 0;transform:scaleX(1.0850);">2</div>
<div class="t" id="t179" style="top:778.00px;font-size:15px;color:#2b2b2b;right:880.00px;transform-origin:100% 0;transform:scaleX(1.0850);">2.6700</div>
<div class="t" id="t180" style="top:778.00px;font-size:15px;color:#2b2b2b;right:742.90px;transform-origin:100% 0;transform:scaleX(1.0850);">0.0000</div>
<div class="t" id="t181" style="top:778.00px;font-size:15px;color:#2b2b2b;right:605.80px;transform-origin:100% 0;transform:scaleX(1.0850);">0.0000</div>
<div class="t" id="t182" style="top:778.00px;font-size:15px;color:#2b2b2b;left:1083.00px;transform-origin:0 0;transform:scaleX(1.1320);">Waiting</div>
<div class="a" style="left:1032px;top:891px;width:91px;height:30px;background:#fafbfc;border:1px solid #b4b9c0;"></div>
<div class="a" style="left:1126px;top:891px;width:65px;height:30px;background:#fafbfc;border:1px solid #b4b9c0;"></div>
<div class="t" id="t183" style="top:899.30px;font-size:15px;color:#5f6369;right:561.00px;transform-origin:100% 0;transform:scaleX(1.0934);">53.8480</div>
<div class="t" id="t184" style="top:899.30px;font-size:15px;color:#5f6369;left:1133.70px;transform-origin:0 0;transform:scaleX(1.0510);">740.2...</div>
<div class="a" style="left:1494px;top:937px;width:144px;height:72px;background:#e9ecf1;border:1px solid #cfd4da;border-radius:3px;"></div>
<div class="t" id="t185" style="top:966.10px;font-size:15px;color:#a0a5ac;left:1523.90px;transform-origin:0 0;transform:scaleX(1.0742);">Close order</div></body></html>
